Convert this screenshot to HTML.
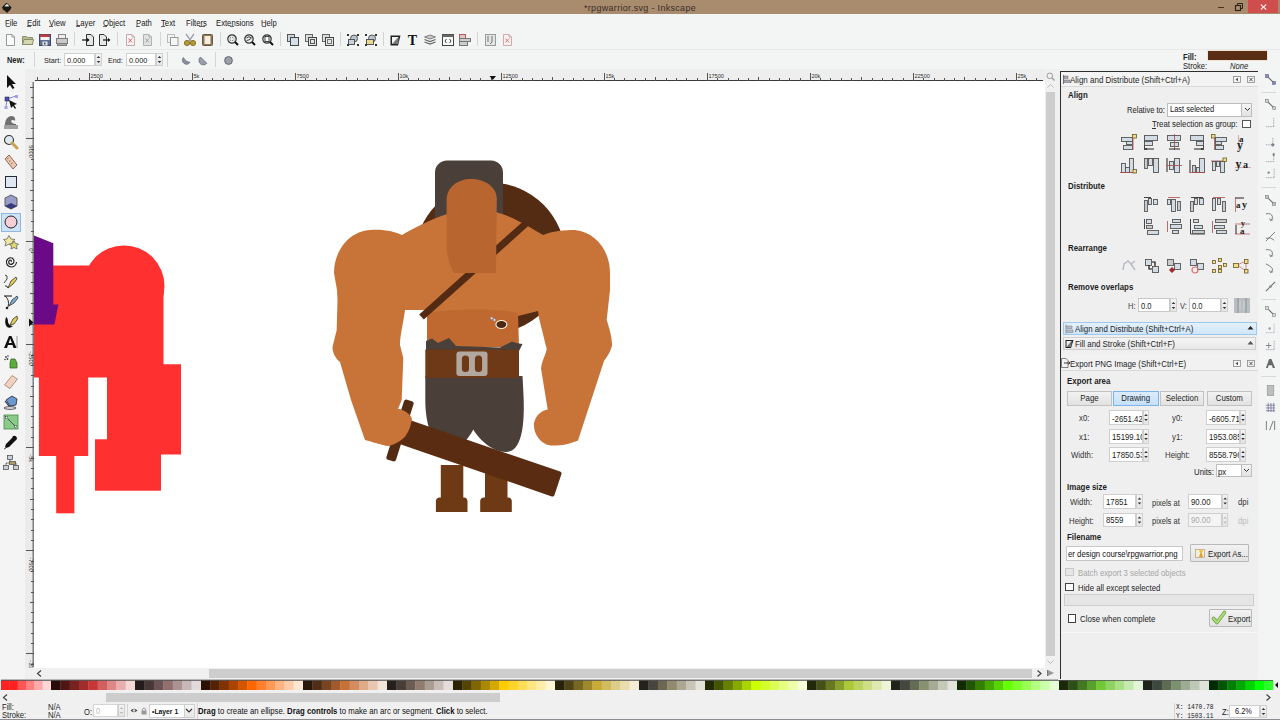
<!DOCTYPE html>
<html><head><meta charset="utf-8">
<style>
*{margin:0;padding:0;box-sizing:border-box}
html,body{width:1280px;height:720px;overflow:hidden;background:#f0f0f0;font-family:"Liberation Sans",sans-serif;color:#1e1e1e}
.a{position:absolute}
.t{position:absolute;white-space:nowrap}
.inp{position:absolute;background:#fff;border:1px solid #c9c9c9}
.btn{position:absolute;background:linear-gradient(#f2f2f2,#e3e3e3);border:1px solid #b9b9b9;border-radius:1px}
.chk{position:absolute;background:#fff;border:1px solid #4a4a4a;width:9px;height:9px}
svg{position:absolute;overflow:visible}
</style></head><body>
<div class="a" style="left:0px;top:0px;width:1280px;height:14.5px;background:#a98b6e"></div><svg style="left:1px;top:1.5px" width="12" height="12" viewBox="0 0 12 12"><path d="M5.5 1 Q6.5 1 10.5 5.5 Q9.5 8 8 9 L6 11 L4 9 Q1.5 7.5 1 5.5 Q4.5 1 5.5 1Z" fill="#1a1a14"/><path d="M3.5 4.2 Q5.5 1.8 6.2 2 Q7.5 3 8.2 4.2 Q6 4.8 3.5 4.2Z" fill="#e8e8e8"/></svg><div class="t" style="left:583.6px;top:2.07px;font-size:9.90px;line-height:12px;transform:scaleX(0.9091);transform-origin:0 0;color:#3a2f26;letter-spacing:0.35px;">*rpgwarrior.svg - Inkscape</div><div class="a" style="left:1218px;top:7px;width:6px;height:1.4px;background:#4a3418"></div><svg style="left:1234px;top:1.5px" width="10" height="10" viewBox="0 0 10 10"><rect x="1.5" y="3.5" width="5" height="5" fill="none" stroke="#2b2218" stroke-width="1.1"/><path d="M3.5 3 V1.5 H8.5 V6.5 H7" fill="none" stroke="#2b2218" stroke-width="1"/></svg><div class="a" style="left:1248px;top:0px;width:29.5px;height:13px;background:#cf4d4d"></div><svg style="left:1259.5px;top:3.5px" width="7" height="6" viewBox="0 0 7 6"><path d="M0.8 0.5 L6.2 5.5 M6.2 0.5 L0.8 5.5" stroke="#fbe8e8" stroke-width="1.1"/></svg><div class="a" style="left:0px;top:14px;width:1280px;height:55px;background:#f3f5f4"></div><div class="a" style="left:0px;top:48.5px;width:1280px;height:1px;background:#e7eae9"></div><div class="t" style="left:5.2px;top:17.07px;font-size:8.47px;line-height:12px;transform:scaleX(0.9091);transform-origin:0 0;color:#1a1a1a;">File</div><div class="a" style="left:5.5px;top:26px;width:4.2px;height:0.9px;background:#666"></div><div class="t" style="left:26.5px;top:17.07px;font-size:8.47px;line-height:12px;transform:scaleX(0.9091);transform-origin:0 0;color:#1a1a1a;">Edit</div><div class="a" style="left:26.8px;top:26px;width:4.2px;height:0.9px;background:#666"></div><div class="t" style="left:49.0px;top:17.07px;font-size:8.47px;line-height:12px;transform:scaleX(0.9091);transform-origin:0 0;color:#1a1a1a;">View</div><div class="a" style="left:49.3px;top:26px;width:4.2px;height:0.9px;background:#666"></div><div class="t" style="left:75.5px;top:17.07px;font-size:8.47px;line-height:12px;transform:scaleX(0.9091);transform-origin:0 0;color:#1a1a1a;">Layer</div><div class="a" style="left:75.8px;top:26px;width:4.2px;height:0.9px;background:#666"></div><div class="t" style="left:103.0px;top:17.07px;font-size:8.47px;line-height:12px;transform:scaleX(0.9091);transform-origin:0 0;color:#1a1a1a;">Object</div><div class="a" style="left:103.3px;top:26px;width:4.2px;height:0.9px;background:#666"></div><div class="t" style="left:136.0px;top:17.07px;font-size:8.47px;line-height:12px;transform:scaleX(0.9091);transform-origin:0 0;color:#1a1a1a;">Path</div><div class="a" style="left:136.3px;top:26px;width:4.2px;height:0.9px;background:#666"></div><div class="t" style="left:161.0px;top:17.07px;font-size:8.47px;line-height:12px;transform:scaleX(0.9091);transform-origin:0 0;color:#1a1a1a;">Text</div><div class="a" style="left:161.3px;top:26px;width:4.2px;height:0.9px;background:#666"></div><div class="t" style="left:185.6px;top:17.07px;font-size:8.47px;line-height:12px;transform:scaleX(0.9091);transform-origin:0 0;color:#1a1a1a;">Filters</div><div class="a" style="left:199.0px;top:26px;width:6px;height:0.9px;background:#666"></div><div class="t" style="left:215.6px;top:17.07px;font-size:8.47px;line-height:12px;transform:scaleX(0.9091);transform-origin:0 0;color:#1a1a1a;">Extensions</div><div class="a" style="left:229.5px;top:26px;width:4.5px;height:0.9px;background:#666"></div><div class="t" style="left:261.3px;top:17.07px;font-size:8.47px;line-height:12px;transform:scaleX(0.9091);transform-origin:0 0;color:#1a1a1a;">Help</div><div class="a" style="left:261.6px;top:26px;width:4.2px;height:0.9px;background:#666"></div><svg style="left:4.5px;top:33.5px" width="11" height="12" viewBox="0 0 11 12"><path d="M1.5 0.5 H7 L9.5 3 V11.5 H1.5Z" fill="#fafafa" stroke="#9a9a9a"/><path d="M7 0.5 V3 H9.5" fill="none" stroke="#9a9a9a"/></svg><svg style="left:21.5px;top:33.5px" width="12" height="12" viewBox="0 0 12 12"><path d="M0.5 2.5 H4.5 L5.5 3.5 H10.5 V10.5 H0.5Z" fill="#b9bb92" stroke="#8c8e6a"/><path d="M0.5 10.5 L2 5.5 H11.5 L10.5 10.5Z" fill="#d6d8ae" stroke="#8c8e6a"/></svg><svg style="left:38.5px;top:33.5px" width="12" height="12" viewBox="0 0 12 12"><rect x="0.5" y="0.5" width="11" height="11" fill="#5d6f92" stroke="#3f4a66"/><rect x="1.5" y="0.5" width="9" height="2.5" fill="#c43a3a"/><rect x="1.5" y="3" width="9" height="3" fill="#f4f4f4"/><rect x="3.5" y="7.5" width="5" height="4" fill="#e8e8e8"/><rect x="5" y="8.5" width="1.5" height="2" fill="#444"/></svg><svg style="left:56px;top:33.5px" width="12" height="12" viewBox="0 0 12 12"><rect x="2.5" y="0.5" width="7" height="4" fill="#eee" stroke="#8a8a8a"/><rect x="0.5" y="4.5" width="11" height="5" fill="#c9c9c9" stroke="#7d7d7d"/><rect x="1.5" y="9.5" width="9" height="2" fill="#aaa" stroke="#7d7d7d"/></svg><div class="a" style="left:74px;top:32px;width:1px;height:14px;background:#d4d4d4"></div><svg style="left:81.5px;top:33.5px" width="12" height="12" viewBox="0 0 12 12"><path d="M4.5 0.5 H9 L11.5 3 V11.5 H4.5Z" fill="#e6e6e6" stroke="#333"/><path d="M0 6 H7" stroke="#111" stroke-width="1.2"/><path d="M5 4 L7.5 6 L5 8Z" fill="#111"/></svg><svg style="left:99px;top:33.5px" width="12" height="12" viewBox="0 0 12 12"><path d="M0.5 0.5 H5 L7.5 3 V11.5 H0.5Z" fill="#e6e6e6" stroke="#333"/><path d="M4 6 H10" stroke="#111" stroke-width="1.2"/><path d="M9 4 L11.5 6 L9 8Z" fill="#111"/></svg><div class="a" style="left:117px;top:32px;width:1px;height:14px;background:#d4d4d4"></div><svg style="left:124.5px;top:33.5px" width="11" height="12" viewBox="0 0 11 12"><path d="M1.5 0.5 H7 L9.5 3 V11.5 H1.5Z" fill="#fbf4f4" stroke="#c9a9a9"/><path d="M7 0.5 V3 H9.5" fill="none" stroke="#c9a9a9"/><path d="M3.5 4.5 L7 8.5 M7 4.5 L3.5 8.5" stroke="#d55" stroke-width="0.9"/></svg><svg style="left:142px;top:33.5px" width="11" height="12" viewBox="0 0 11 12"><path d="M1.5 0.5 H7 L9.5 3 V11.5 H1.5Z" fill="#e2e2e2" stroke="#b0b0b0"/><path d="M7 0.5 V3 H9.5" fill="none" stroke="#b0b0b0"/><path d="M3.5 4.5 L7 8.5 M7 4.5 L3.5 8.5" stroke="#999" stroke-width="0.9"/></svg><div class="a" style="left:159.5px;top:32px;width:1px;height:14px;background:#d4d4d4"></div><svg style="left:167px;top:33.5px" width="12" height="12" viewBox="0 0 12 12"><rect x="0.5" y="0.5" width="7" height="8" fill="#f2f2f2" stroke="#bbb"/><rect x="3.5" y="3.5" width="7.5" height="8" fill="#f6f6f6" stroke="#999"/></svg><svg style="left:184px;top:33.5px" width="12" height="12" viewBox="0 0 12 12"><path d="M2 0 L7 7 M10 0 L5 7" stroke="#a0a0b0" stroke-width="1.3"/><circle cx="3" cy="9" r="2.6" fill="#b49a3a" stroke="#8a7426"/><circle cx="9" cy="9" r="2.6" fill="#b49a3a" stroke="#8a7426"/></svg><svg style="left:202px;top:33.5px" width="11" height="12" viewBox="0 0 11 12"><rect x="0.5" y="0.5" width="10" height="11" rx="1" fill="#8b7650" stroke="#6a5a3c"/><rect x="2.5" y="2" width="6" height="8" fill="#f4efe2"/></svg><div class="a" style="left:219.5px;top:32px;width:1px;height:14px;background:#d4d4d4"></div><svg style="left:227px;top:33.5px" width="12" height="12" viewBox="0 0 12 12"><circle cx="5" cy="5" r="4.2" fill="#e9edf0" stroke="#333" stroke-width="1.2"/><rect x="3" y="3.5" width="4" height="3" fill="none" stroke="#888" stroke-dasharray="1 1"/><path d="M8 8 L11 11" stroke="#111" stroke-width="2"/></svg><svg style="left:244px;top:33.5px" width="12" height="12" viewBox="0 0 12 12"><circle cx="5" cy="5" r="4.2" fill="#e9edf0" stroke="#333" stroke-width="1.2"/><path d="M2.5 4 Q5 1.5 7.5 4 Q5 6.5 2.5 6.5" fill="none" stroke="#444"/><path d="M8 8 L11 11" stroke="#111" stroke-width="2"/></svg><svg style="left:262px;top:33.5px" width="12" height="12" viewBox="0 0 12 12"><circle cx="5" cy="5" r="4.2" fill="#e9edf0" stroke="#333" stroke-width="1.2"/><rect x="3" y="2.5" width="4" height="5" fill="#fff" stroke="#444"/><path d="M8 8 L11 11" stroke="#111" stroke-width="2"/></svg><div class="a" style="left:280px;top:32px;width:1px;height:14px;background:#d4d4d4"></div><svg style="left:287px;top:33.5px" width="12" height="12" viewBox="0 0 12 12"><rect x="0.5" y="0.5" width="7" height="7" fill="#c9d6e0" stroke="#555"/><rect x="3.5" y="3.5" width="8" height="8" fill="#d4dfe8" stroke="#444"/></svg><svg style="left:304.5px;top:33.5px" width="12" height="12" viewBox="0 0 12 12"><rect x="0.5" y="0.5" width="7" height="7" fill="#ddd" stroke="#666"/><rect x="3.5" y="3.5" width="8" height="8" fill="#e6e6e6" stroke="#444"/><rect x="5.5" y="5.5" width="4" height="4" fill="none" stroke="#555"/></svg><svg style="left:321.5px;top:33.5px" width="12" height="12" viewBox="0 0 12 12"><rect x="0.5" y="0.5" width="7" height="7" fill="#ddd" stroke="#666"/><rect x="3.5" y="3.5" width="8" height="8" fill="#e6e6e6" stroke="#444"/><rect x="5.5" y="5.5" width="4" height="4" fill="none" stroke="#777"/></svg><div class="a" style="left:339.5px;top:32px;width:1px;height:14px;background:#d4d4d4"></div><svg style="left:347px;top:33.5px" width="12" height="12" viewBox="0 0 12 12"><circle cx="7" cy="4.5" r="3.5" fill="#b8c4d0" stroke="#555"/><rect x="1.5" y="5.5" width="6" height="5" fill="#c8d2dc" stroke="#555"/><g fill="#333"><rect x="0" y="0" width="2" height="2"/><rect x="10" y="0" width="2" height="2"/><rect x="0" y="10" width="2" height="2"/><rect x="10" y="10" width="2" height="2"/></g></svg><svg style="left:364.5px;top:33.5px" width="12" height="12" viewBox="0 0 12 12"><circle cx="7" cy="4.5" r="3.5" fill="#b8c4d0" stroke="#555"/><rect x="1.5" y="5.5" width="7" height="5" fill="#e8d890" stroke="#555"/><g fill="#333"><rect x="0" y="0" width="2" height="2"/><rect x="10" y="0" width="2" height="2"/><rect x="0" y="10" width="2" height="2"/><rect x="10" y="10" width="2" height="2"/></g></svg><div class="a" style="left:382.5px;top:32px;width:1px;height:14px;background:#d4d4d4"></div><svg style="left:390px;top:33.5px" width="12" height="12" viewBox="0 0 12 12"><path d="M0.5 1.5 H10.5 L8 11.5 H0.5Z" fill="#222"/><path d="M2 3 H8.5 L6.5 10 H2Z" fill="#f4f4f4"/><path d="M2 10 L8.5 3 V10Z" fill="#777"/></svg><svg style="left:406px;top:32.5px" width="13" height="13" viewBox="0 0 13 13"><text x="6.5" y="12" text-anchor="middle" font-family="Liberation Serif" font-weight="bold" font-size="14" fill="#111">T</text></svg><svg style="left:424px;top:33.5px" width="12" height="12" viewBox="0 0 12 12"><path d="M0.5 3 L6 1 L11.5 3 L6 5Z" fill="#ccc" stroke="#666" stroke-width="0.8"/><path d="M0.5 5.5 L6 7.5 L11.5 5.5 M0.5 8 L6 10 L11.5 8" fill="none" stroke="#666" stroke-width="1.3"/></svg><svg style="left:442px;top:33.5px" width="12" height="12" viewBox="0 0 12 12"><rect x="0.5" y="0.5" width="11" height="11" fill="#f8f8f8" stroke="#444"/><rect x="0.5" y="0.5" width="11" height="2.5" fill="#666"/><path d="M4.5 5 L3 7 L4.5 9 M7.5 5 L9 7 L7.5 9" fill="none" stroke="#333" stroke-width="0.9"/></svg><svg style="left:459px;top:33.5px" width="12" height="12" viewBox="0 0 12 12"><rect x="0.5" y="0.5" width="6" height="4" fill="#d8c8c8" stroke="#b55"/><rect x="0.5" y="4.5" width="11" height="3" fill="#ccc" stroke="#777"/><rect x="0.5" y="7.5" width="8" height="4" fill="#ccc" stroke="#777"/></svg><div class="a" style="left:476.5px;top:32px;width:1px;height:14px;background:#d4d4d4"></div><svg style="left:485px;top:33.5px" width="11" height="12" viewBox="0 0 11 12"><rect x="0.5" y="0.5" width="10" height="11" fill="#e4e4e4" stroke="#9a9a9a"/><path d="M3 2 V8 M7 2 V8 L5 10" fill="none" stroke="#777"/></svg><svg style="left:502px;top:33.5px" width="11" height="12" viewBox="0 0 11 12"><path d="M1.5 0.5 H7 L9.5 3 V11.5 H1.5Z" fill="#fbf2f2" stroke="#d3a9a9"/><path d="M7 0.5 V3 H9.5" fill="none" stroke="#d3a9a9"/><path d="M3.5 4.5 L7 8.5 M7 4.5 L3.5 8.5" stroke="#d66" stroke-width="0.9"/></svg><div class="t" style="left:7.0px;top:54.68px;font-size:8.14px;line-height:12px;transform:scaleX(0.9091);transform-origin:0 0;font-weight:bold;color:#222;">New:</div><div class="a" style="left:33.5px;top:52px;width:1px;height:15px;background:#d4d4d4"></div><div class="t" style="left:44.0px;top:54.76px;font-size:7.92px;line-height:12px;transform:scaleX(0.9091);transform-origin:0 0;color:#222;">Start:</div><div class="inp" style="left:64px;top:53px;width:31px;height:13px;border-color:#d0d0d0"></div><div class="t" style="left:67.0px;top:54.72px;font-size:8.03px;line-height:12px;transform:scaleX(0.9091);transform-origin:0 0;color:#111;">0.000</div><div class="a" style="left:95px;top:53px;width:7px;height:13px;background:linear-gradient(#f4f4f4,#e4e4e4);border:1px solid #d0d0d0"></div><svg style="left:95px;top:53px" width="7" height="13" viewBox="0 0 7 13"><path d="M1.7 5.0 L3.5 3.0 L5.3 5.0Z M1.7 8.0 L3.5 10.0 L5.3 8.0Z" fill="#333"/></svg><div class="t" style="left:108.0px;top:54.76px;font-size:7.92px;line-height:12px;transform:scaleX(0.9091);transform-origin:0 0;color:#222;">End:</div><div class="inp" style="left:126px;top:53px;width:30px;height:13px;border-color:#d0d0d0"></div><div class="t" style="left:128.5px;top:54.72px;font-size:8.03px;line-height:12px;transform:scaleX(0.9091);transform-origin:0 0;color:#111;">0.000</div><div class="a" style="left:156px;top:53px;width:7px;height:13px;background:linear-gradient(#f4f4f4,#e4e4e4);border:1px solid #d0d0d0"></div><svg style="left:156px;top:53px" width="7" height="13" viewBox="0 0 7 13"><path d="M1.7 5.0 L3.5 3.0 L5.3 5.0Z M1.7 8.0 L3.5 10.0 L5.3 8.0Z" fill="#333"/></svg><div class="a" style="left:167px;top:52px;width:1px;height:15px;background:#d4d4d4"></div><svg style="left:180.5px;top:55.5px" width="10" height="10" viewBox="0 0 10 10"><path d="M2.3 1.6 A4.1 4.1 0 1 0 9 6.3 Q5.2 6.6 2.3 1.6Z" fill="#8c90a0" stroke="#5d6270" stroke-width="0.7"/></svg><svg style="left:197.5px;top:55.5px" width="10" height="10" viewBox="0 0 10 10"><path d="M2.5 1 C0.3 3 0.5 6.5 2.7 8 C4.8 9.5 7.5 9 8.8 7.3 Z" fill="#9a9eac" stroke="#5d6270" stroke-width="0.7"/></svg><div class="a" style="left:214.8px;top:52px;width:1px;height:15px;background:#d4d4d4"></div><svg style="left:223.5px;top:55.5px" width="9" height="9" viewBox="0 0 9 9"><circle cx="4.5" cy="4.5" r="3.9" fill="#9ca0aa" stroke="#5a5e68" stroke-width="0.9"/></svg><div class="t" style="left:1183.0px;top:50.60px;font-size:8.36px;line-height:12px;transform:scaleX(0.9091);transform-origin:0 0;color:#222;font-weight:600;">Fill:</div><div class="a" style="left:1208px;top:51.3px;width:59px;height:8.4px;background:#5a2e14;box-shadow:0 0 0 0.6px #f0d8c0"></div><div class="t" style="left:1183.0px;top:59.60px;font-size:8.36px;line-height:12px;transform:scaleX(0.9091);transform-origin:0 0;color:#222;">Stroke:</div><div class="t" style="left:1229.8px;top:59.60px;font-size:8.36px;line-height:12px;transform:scaleX(0.9091);transform-origin:0 0;font-style:italic;color:#222;">None</div><div class="a" style="left:0px;top:69px;width:25px;height:611px;background:#f3f4f3"></div><div class="a" style="left:1px;top:212.5px;width:20px;height:19px;background:#cfe3f6;border:1px solid #8fb8e0"></div><svg style="left:3px;top:74px" width="16" height="16" viewBox="0 0 16 16"><path d="M4 1 L4 14 L7 11 L9.5 15 L11.5 14 L9 10 L13 10Z" fill="#111"/></svg><svg style="left:3px;top:94px" width="16" height="16" viewBox="0 0 16 16"><path d="M4 5 L13 2" stroke="#6a6ad0" stroke-width="0.8"/><path d="M4 5 L3 13" stroke="#6a6ad0" stroke-width="0.8"/><rect x="2" y="3" width="4" height="4" fill="#4848c8" stroke="#222" stroke-width="0.5"/><rect x="12" y="1" width="3" height="3" fill="#a0a0e8"/><rect x="1.5" y="12" width="3" height="3" fill="#a0a0e8"/><path d="M6 6 L14 10 L11 11 L13 14 L12 15 L10 12 L8 14Z" fill="#111"/></svg><svg style="left:3px;top:114px" width="16" height="16" viewBox="0 0 16 16"><path d="M2 14 V9 Q3 3 8 2 Q13 2 12 7 Q10 5 8 7 Q9 10 13 10 V14Z" fill="#707070"/><rect x="1" y="11" width="14" height="4" fill="#a0a0a0"/></svg><svg style="left:3px;top:134px" width="16" height="16" viewBox="0 0 16 16"><circle cx="6" cy="6" r="4.5" fill="#dde8f0" stroke="#333" stroke-width="1.1"/><path d="M9 9 L14 14" stroke="#c8a050" stroke-width="3" stroke-linecap="round"/></svg><svg style="left:3px;top:154px" width="16" height="16" viewBox="0 0 16 16"><path d="M2 5 L6 1 L14 11 L10 15Z" fill="#e8c8b0" stroke="#8a5a4a" stroke-width="0.9"/><path d="M4 5 L5.5 4 M6 7.5 L7.5 6.5 M8 10 L9.5 9" stroke="#8a5a4a" stroke-width="0.8"/></svg><svg style="left:3px;top:174px" width="16" height="16" viewBox="0 0 16 16"><rect x="2.5" y="2.5" width="11" height="11" fill="#dfe8f0" stroke="#2a2a3a" stroke-width="1"/></svg><svg style="left:3px;top:194px" width="16" height="16" viewBox="0 0 16 16"><path d="M8 1 L14 4 V12 L8 15 L2 12 V4Z" fill="#9a9cc8" stroke="#444" stroke-width="0.8"/><path d="M2 12 L8 9 L14 12 L8 15Z" fill="#3a3a7a"/></svg><svg style="left:3px;top:214px" width="16" height="16" viewBox="0 0 16 16"><circle cx="8" cy="8" r="6" fill="#f6cfd6" stroke="#222" stroke-width="1"/></svg><svg style="left:3px;top:234px" width="16" height="16" viewBox="0 0 16 16"><path d="M6 1.5 L8 5 L12 5.5 L9 8 L10 12 L6 10 L2 12 L3 8 L0.5 5.5 L4 5Z" fill="#f0e8a0" stroke="#555" stroke-width="0.7"/><path d="M11 7 L12.5 9.5 L15.5 10 L13.5 12 L14 15 L11 13.5 L8 15 L8.5 12 L6.5 10 L9.5 9.5Z" fill="#e0d870" stroke="#555" stroke-width="0.7"/></svg><svg style="left:3px;top:254px" width="16" height="16" viewBox="0 0 16 16"><path d="M8 8 Q9 6 7 6 Q5 7 6 9.5 Q8 11.5 10.5 9 Q12 6 9 4 Q5 3 3.5 7 Q3 12 8 13 Q13 13 13.5 8" fill="none" stroke="#222" stroke-width="1.1"/></svg><svg style="left:3px;top:274px" width="16" height="16" viewBox="0 0 16 16"><path d="M2 1 Q5 1 4 5 L1 9" fill="none" stroke="#333" stroke-width="0.9"/><path d="M5 14 L8 7 L13 3 L14 5 L10 10Z" fill="#e8d050" stroke="#333" stroke-width="0.8"/><path d="M5 14 Q4 11 2 12" fill="none" stroke="#333"/></svg><svg style="left:3px;top:294px" width="16" height="16" viewBox="0 0 16 16"><path d="M1 2 H9" stroke="#333" stroke-width="1.2"/><path d="M2 2 Q7 6 5 13" fill="none" stroke="#333" stroke-width="1"/><path d="M6 12 L9 6 L14 2 L15 4 L11 9Z" fill="#7ab0d8" stroke="#333" stroke-width="0.8"/><circle cx="4" cy="14" r="1.3" fill="#222"/></svg><svg style="left:3px;top:314px" width="16" height="16" viewBox="0 0 16 16"><path d="M3 3 Q1 9 4 13 Q7 15 10 12 Q6 12 5 8 Q5 4 3 3Z" fill="#111"/><path d="M7 11 L10 5 L14 2 L14.5 5 L11 10Z" fill="#e8d050" stroke="#333" stroke-width="0.8"/></svg><svg style="left:3px;top:334px" width="16" height="16" viewBox="0 0 16 16"><path d="M1 14 L6 2 H8.5 L13.5 14 H10.5 L9.5 11 H5 L4 14Z M5.7 9 H8.8 L7.2 4.5Z" fill="#111"/><path d="M14 2 V14" stroke="#999" stroke-width="1"/></svg><svg style="left:3px;top:354px" width="16" height="16" viewBox="0 0 16 16"><g fill="#444"><circle cx="3" cy="3" r="0.9"/><circle cx="5" cy="2" r="0.8"/><circle cx="2" cy="5.5" r="0.8"/><circle cx="4.5" cy="5" r="0.9"/></g><path d="M7 9 L8 5 H12 L14 9 V14 H7Z" fill="#5cae3c" stroke="#2a5a1a" stroke-width="0.7"/></svg><svg style="left:3px;top:374px" width="16" height="16" viewBox="0 0 16 16"><path d="M1.5 11 L9 1.5 L14.5 5 L7 14.5Z" fill="#f0d0c0" stroke="#a08070" stroke-width="0.8"/></svg><svg style="left:3px;top:394px" width="16" height="16" viewBox="0 0 16 16"><path d="M3 6 L9 2 L14 5 L13 11 L7 12Z" fill="#6a9ad0" stroke="#223" stroke-width="0.8"/><path d="M2 7 L6 12" stroke="#223" stroke-width="1.2"/><ellipse cx="7" cy="14" rx="6" ry="1.3" fill="none" stroke="#334" stroke-width="0.9"/></svg><svg style="left:3px;top:414px" width="16" height="16" viewBox="0 0 16 16"><rect x="1" y="1" width="14" height="14" fill="#8acb8a" stroke="#4a8a4a" stroke-width="0.8"/><path d="M1 1 L15 15" stroke="#fff" stroke-width="0" /><path d="M3.5 3.5 L12.5 12.5" stroke="#333" stroke-width="0.8"/><rect x="2.5" y="2.5" width="2.2" height="2.2" fill="#fff" stroke="#333" stroke-width="0.5"/><rect x="11.5" y="11.5" width="2.2" height="2.2" fill="#fff" stroke="#333" stroke-width="0.5"/></svg><svg style="left:3px;top:434px" width="16" height="16" viewBox="0 0 16 16"><path d="M10 2 Q13 1 14 4 Q14 6 12 7 L6 13 L3 14 L2 13 L3 10 L9 4Z" fill="#111"/><path d="M3 14 L1 15" stroke="#555"/></svg><svg style="left:3px;top:454px" width="16" height="16" viewBox="0 0 16 16"><rect x="4.5" y="1.5" width="5" height="4" fill="#c8d0d8" stroke="#555" stroke-width="0.8"/><rect x="6.5" y="7.5" width="6" height="3" fill="#e8d070" stroke="#555" stroke-width="0.8"/><rect x="0.5" y="11.5" width="5" height="4" fill="#c8d0d8" stroke="#555" stroke-width="0.8"/><rect x="10.5" y="11.5" width="5" height="4" fill="#c8d0d8" stroke="#555" stroke-width="0.8"/><path d="M7 5.5 V7.5 M3 11.5 V9 H13 V11.5" fill="none" stroke="#555" stroke-width="0.8"/></svg><div class="a" style="left:25px;top:69px;width:1020px;height:12px;background:#eeeeee"></div><div class="a" style="left:25px;top:81px;width:9px;height:587px;background:#ebebeb"></div><svg style="left:0;top:0" width="1280" height="720"><path d="M35 80.5 H1043" stroke="#3a3a3a" stroke-width="1"/><path d="M37.5 77 V81" stroke="#555" stroke-width="1"/><path d="M48.5 78 V81" stroke="#555" stroke-width="1"/><path d="M58.5 78 V81" stroke="#555" stroke-width="1"/><path d="M68.5 78 V81" stroke="#555" stroke-width="1"/><path d="M79.5 78 V81" stroke="#555" stroke-width="1"/><path d="M89.5 73 V81" stroke="#555" stroke-width="1"/><path d="M99.5 78 V81" stroke="#555" stroke-width="1"/><path d="M110.5 78 V81" stroke="#555" stroke-width="1"/><path d="M120.5 78 V81" stroke="#555" stroke-width="1"/><path d="M130.5 78 V81" stroke="#555" stroke-width="1"/><path d="M140.5 77 V81" stroke="#555" stroke-width="1"/><path d="M151.5 78 V81" stroke="#555" stroke-width="1"/><path d="M161.5 78 V81" stroke="#555" stroke-width="1"/><path d="M171.5 78 V81" stroke="#555" stroke-width="1"/><path d="M182.5 78 V81" stroke="#555" stroke-width="1"/><text x="90.4" y="77.5" font-family="Liberation Sans" font-size="5.6" fill="#333">2500</text><path d="M192.5 73 V81" stroke="#555" stroke-width="1"/><path d="M202.5 78 V81" stroke="#555" stroke-width="1"/><path d="M212.5 78 V81" stroke="#555" stroke-width="1"/><path d="M223.5 78 V81" stroke="#555" stroke-width="1"/><path d="M233.5 78 V81" stroke="#555" stroke-width="1"/><path d="M243.5 77 V81" stroke="#555" stroke-width="1"/><path d="M254.5 78 V81" stroke="#555" stroke-width="1"/><path d="M264.5 78 V81" stroke="#555" stroke-width="1"/><path d="M274.5 78 V81" stroke="#555" stroke-width="1"/><path d="M285.5 78 V81" stroke="#555" stroke-width="1"/><text x="193.4" y="77.5" font-family="Liberation Sans" font-size="5.6" fill="#333">5k</text><path d="M295.5 73 V81" stroke="#555" stroke-width="1"/><path d="M305.5 78 V81" stroke="#555" stroke-width="1"/><path d="M316.5 78 V81" stroke="#555" stroke-width="1"/><path d="M326.5 78 V81" stroke="#555" stroke-width="1"/><path d="M336.5 78 V81" stroke="#555" stroke-width="1"/><path d="M346.5 77 V81" stroke="#555" stroke-width="1"/><path d="M357.5 78 V81" stroke="#555" stroke-width="1"/><path d="M367.5 78 V81" stroke="#555" stroke-width="1"/><path d="M377.5 78 V81" stroke="#555" stroke-width="1"/><path d="M388.5 78 V81" stroke="#555" stroke-width="1"/><text x="296.4" y="77.5" font-family="Liberation Sans" font-size="5.6" fill="#333">7500</text><path d="M398.5 73 V81" stroke="#555" stroke-width="1"/><path d="M408.5 78 V81" stroke="#555" stroke-width="1"/><path d="M418.5 78 V81" stroke="#555" stroke-width="1"/><path d="M429.5 78 V81" stroke="#555" stroke-width="1"/><path d="M439.5 78 V81" stroke="#555" stroke-width="1"/><path d="M449.5 77 V81" stroke="#555" stroke-width="1"/><path d="M460.5 78 V81" stroke="#555" stroke-width="1"/><path d="M470.5 78 V81" stroke="#555" stroke-width="1"/><path d="M480.5 78 V81" stroke="#555" stroke-width="1"/><path d="M491.5 78 V81" stroke="#555" stroke-width="1"/><text x="399.4" y="77.5" font-family="Liberation Sans" font-size="5.6" fill="#333">10k</text><path d="M501.5 73 V81" stroke="#555" stroke-width="1"/><path d="M511.5 78 V81" stroke="#555" stroke-width="1"/><path d="M522.5 78 V81" stroke="#555" stroke-width="1"/><path d="M532.5 78 V81" stroke="#555" stroke-width="1"/><path d="M542.5 78 V81" stroke="#555" stroke-width="1"/><path d="M552.5 77 V81" stroke="#555" stroke-width="1"/><path d="M563.5 78 V81" stroke="#555" stroke-width="1"/><path d="M573.5 78 V81" stroke="#555" stroke-width="1"/><path d="M583.5 78 V81" stroke="#555" stroke-width="1"/><path d="M594.5 78 V81" stroke="#555" stroke-width="1"/><text x="502.4" y="77.5" font-family="Liberation Sans" font-size="5.6" fill="#333">12500</text><path d="M604.5 73 V81" stroke="#555" stroke-width="1"/><path d="M614.5 78 V81" stroke="#555" stroke-width="1"/><path d="M624.5 78 V81" stroke="#555" stroke-width="1"/><path d="M635.5 78 V81" stroke="#555" stroke-width="1"/><path d="M645.5 78 V81" stroke="#555" stroke-width="1"/><path d="M655.5 77 V81" stroke="#555" stroke-width="1"/><path d="M666.5 78 V81" stroke="#555" stroke-width="1"/><path d="M676.5 78 V81" stroke="#555" stroke-width="1"/><path d="M686.5 78 V81" stroke="#555" stroke-width="1"/><path d="M697.5 78 V81" stroke="#555" stroke-width="1"/><text x="605.4" y="77.5" font-family="Liberation Sans" font-size="5.6" fill="#333">15k</text><path d="M707.5 73 V81" stroke="#555" stroke-width="1"/><path d="M717.5 78 V81" stroke="#555" stroke-width="1"/><path d="M728.5 78 V81" stroke="#555" stroke-width="1"/><path d="M738.5 78 V81" stroke="#555" stroke-width="1"/><path d="M748.5 78 V81" stroke="#555" stroke-width="1"/><path d="M758.5 77 V81" stroke="#555" stroke-width="1"/><path d="M769.5 78 V81" stroke="#555" stroke-width="1"/><path d="M779.5 78 V81" stroke="#555" stroke-width="1"/><path d="M789.5 78 V81" stroke="#555" stroke-width="1"/><path d="M800.5 78 V81" stroke="#555" stroke-width="1"/><text x="708.4" y="77.5" font-family="Liberation Sans" font-size="5.6" fill="#333">17500</text><path d="M810.5 73 V81" stroke="#555" stroke-width="1"/><path d="M820.5 78 V81" stroke="#555" stroke-width="1"/><path d="M830.5 78 V81" stroke="#555" stroke-width="1"/><path d="M841.5 78 V81" stroke="#555" stroke-width="1"/><path d="M851.5 78 V81" stroke="#555" stroke-width="1"/><path d="M861.5 77 V81" stroke="#555" stroke-width="1"/><path d="M872.5 78 V81" stroke="#555" stroke-width="1"/><path d="M882.5 78 V81" stroke="#555" stroke-width="1"/><path d="M892.5 78 V81" stroke="#555" stroke-width="1"/><path d="M903.5 78 V81" stroke="#555" stroke-width="1"/><text x="811.4" y="77.5" font-family="Liberation Sans" font-size="5.6" fill="#333">20k</text><path d="M913.5 73 V81" stroke="#555" stroke-width="1"/><path d="M923.5 78 V81" stroke="#555" stroke-width="1"/><path d="M934.5 78 V81" stroke="#555" stroke-width="1"/><path d="M944.5 78 V81" stroke="#555" stroke-width="1"/><path d="M954.5 78 V81" stroke="#555" stroke-width="1"/><path d="M964.5 77 V81" stroke="#555" stroke-width="1"/><path d="M975.5 78 V81" stroke="#555" stroke-width="1"/><path d="M985.5 78 V81" stroke="#555" stroke-width="1"/><path d="M995.5 78 V81" stroke="#555" stroke-width="1"/><path d="M1006.5 78 V81" stroke="#555" stroke-width="1"/><text x="914.4" y="77.5" font-family="Liberation Sans" font-size="5.6" fill="#333">22500</text><path d="M1016.5 73 V81" stroke="#555" stroke-width="1"/><path d="M1026.5 78 V81" stroke="#555" stroke-width="1"/><path d="M1036.5 78 V81" stroke="#555" stroke-width="1"/><text x="1017.4" y="77.5" font-family="Liberation Sans" font-size="5.6" fill="#333">25k</text><path d="M489.5 76 L496 76 L492.7 80Z" fill="#111"/></svg><svg style="left:0;top:0" width="1280" height="720"><path d="M33.2 82 V667" stroke="#6e6e6e" stroke-width="1.3"/><path d="M30 87.5 H34" stroke="#555" stroke-width="1"/><path d="M31 97.5 H34" stroke="#555" stroke-width="1"/><path d="M31 107.5 H34" stroke="#555" stroke-width="1"/><path d="M31 118.5 H34" stroke="#555" stroke-width="1"/><path d="M31 128.5 H34" stroke="#555" stroke-width="1"/><path d="M26 138.5 H34" stroke="#555" stroke-width="1"/><path d="M31 149.5 H34" stroke="#555" stroke-width="1"/><path d="M31 159.5 H34" stroke="#555" stroke-width="1"/><path d="M31 169.5 H34" stroke="#555" stroke-width="1"/><path d="M31 180.5 H34" stroke="#555" stroke-width="1"/><path d="M30 190.5 H34" stroke="#555" stroke-width="1"/><path d="M31 200.5 H34" stroke="#555" stroke-width="1"/><path d="M31 210.5 H34" stroke="#555" stroke-width="1"/><path d="M31 221.5 H34" stroke="#555" stroke-width="1"/><path d="M31 231.5 H34" stroke="#555" stroke-width="1"/><path d="M26 241.5 H34" stroke="#555" stroke-width="1"/><path d="M31 252.5 H34" stroke="#555" stroke-width="1"/><path d="M31 262.5 H34" stroke="#555" stroke-width="1"/><path d="M31 272.5 H34" stroke="#555" stroke-width="1"/><path d="M31 282.5 H34" stroke="#555" stroke-width="1"/><path d="M30 293.5 H34" stroke="#555" stroke-width="1"/><path d="M31 303.5 H34" stroke="#555" stroke-width="1"/><path d="M31 313.5 H34" stroke="#555" stroke-width="1"/><path d="M31 324.5 H34" stroke="#555" stroke-width="1"/><path d="M31 334.5 H34" stroke="#555" stroke-width="1"/><path d="M26 344.5 H34" stroke="#555" stroke-width="1"/><path d="M31 355.5 H34" stroke="#555" stroke-width="1"/><path d="M31 365.5 H34" stroke="#555" stroke-width="1"/><path d="M31 375.5 H34" stroke="#555" stroke-width="1"/><path d="M31 386.5 H34" stroke="#555" stroke-width="1"/><path d="M30 396.5 H34" stroke="#555" stroke-width="1"/><path d="M31 406.5 H34" stroke="#555" stroke-width="1"/><path d="M31 416.5 H34" stroke="#555" stroke-width="1"/><path d="M31 427.5 H34" stroke="#555" stroke-width="1"/><path d="M31 437.5 H34" stroke="#555" stroke-width="1"/><path d="M26 447.5 H34" stroke="#555" stroke-width="1"/><path d="M31 458.5 H34" stroke="#555" stroke-width="1"/><path d="M31 468.5 H34" stroke="#555" stroke-width="1"/><path d="M31 478.5 H34" stroke="#555" stroke-width="1"/><path d="M31 488.5 H34" stroke="#555" stroke-width="1"/><path d="M30 499.5 H34" stroke="#555" stroke-width="1"/><path d="M31 509.5 H34" stroke="#555" stroke-width="1"/><path d="M31 519.5 H34" stroke="#555" stroke-width="1"/><path d="M31 530.5 H34" stroke="#555" stroke-width="1"/><path d="M31 540.5 H34" stroke="#555" stroke-width="1"/><path d="M26 550.5 H34" stroke="#555" stroke-width="1"/><path d="M31 561.5 H34" stroke="#555" stroke-width="1"/><path d="M31 571.5 H34" stroke="#555" stroke-width="1"/><path d="M31 581.5 H34" stroke="#555" stroke-width="1"/><path d="M31 592.5 H34" stroke="#555" stroke-width="1"/><path d="M30 602.5 H34" stroke="#555" stroke-width="1"/><path d="M31 612.5 H34" stroke="#555" stroke-width="1"/><path d="M31 622.5 H34" stroke="#555" stroke-width="1"/><path d="M31 633.5 H34" stroke="#555" stroke-width="1"/><path d="M31 643.5 H34" stroke="#555" stroke-width="1"/><path d="M26 653.5 H34" stroke="#555" stroke-width="1"/><path d="M31 664.5 H34" stroke="#555" stroke-width="1"/><text transform="translate(29.2 145.3) rotate(90)" font-family="Liberation Sans" font-size="5.6" fill="#333">5000</text><text transform="translate(29.2 248.3) rotate(90)" font-family="Liberation Sans" font-size="5.6" fill="#333">0</text><text transform="translate(29.2 351.3) rotate(90)" font-family="Liberation Sans" font-size="5.6" fill="#333">-2500</text><text transform="translate(29.2 454.3) rotate(90)" font-family="Liberation Sans" font-size="5.6" fill="#333">-5k</text><text transform="translate(29.2 557.3) rotate(90)" font-family="Liberation Sans" font-size="5.6" fill="#333">-7500</text><text transform="translate(29.2 660.3) rotate(90)" font-family="Liberation Sans" font-size="5.6" fill="#333">-10k</text><path d="M29 318.5 L33.5 322.5 L29 326.5Z" fill="#111"/></svg><div class="a" style="left:34px;top:81px;width:1011px;height:587px;background:#fff"></div><svg class="a" style="left:0;top:0" width="1280" height="720" viewBox="0 0 1280 720">
<defs><clipPath id="cv"><rect x="34" y="81" width="1011" height="587"/></clipPath></defs>
<g clip-path="url(#cv)">
 <g fill="#fe3030">
  <rect x="30" y="265.5" width="94" height="100"/><rect x="120" y="286" width="43.5" height="80"/>
  <circle cx="124" cy="286" r="40.5"/>
  <rect x="30" y="364.5" width="151" height="13"/>
  <rect x="107" y="364.5" width="74" height="90"/>
  <rect x="38.9" y="377" width="49.3" height="79"/>
  <rect x="56.2" y="455" width="18.2" height="58.3"/>
  <rect x="95" y="439.3" width="66" height="51.4"/>
 </g>
 <path fill="#6a0a86" d="M30 234 L53.3 243.3 L53.3 304.4 L58.4 304.4 L54.4 324.4 L30 324.4Z"/>
 <circle cx="490" cy="258" r="75.5" fill="#542c14"/>
 <rect x="435" y="160.5" width="68" height="80" rx="12" fill="#4a3f39"/>
 <path fill="#c87438" d="M334 273 C334 250 350 231 370 230 C385 229 395 232 402 235 C420 225 445 211 472 209 C500 208 525 224 543 235 C552 231 565 230 575 230 C595 232 610 250 610 273 L610 290 L606.7 320 C610 330 612 338 612 345 C611 352 606 358 604 361 L578 440.6 C568 445 558 446 550.6 445.5 C540 444 533 433 534 423 C536 415 542 410 547.7 409.5 L541 368.6 C542 360 546 354 546.7 349 L539 318 L538 311 L518 316 L518 346 L427 346 L427 310 L405 310 C403 325 400 335 400 345 L403.3 358 L401.7 400 L398 409 C404 410 412 414 411.7 420 C410 430 407 434 405 436.7 C398 443 392 446 386.7 445.8 L365 440 L351 400 L340 362 C335 358 332.5 352 332.5 347 L336.7 330 L337.5 300 L337 290Z"/>
 <path fill="#bf6930" d="M427 313 C450 309 495 308 518 313 L519 347 L427 347Z"/>
 <path d="M527 222.5 L421.5 317" stroke="#532b14" stroke-width="7"/>
 <path fill="#b8652f" d="M446.6 200 C446.6 187 458 179 471 179 C485 179 496.8 187 496.8 199 L496 273 L454 273 C452 271 446.6 256 446.6 247 Z"/>
 <path fill="#4a3f39" d="M425.3 376 L522.5 376 L523.5 395 C525 428 521 452 506 452 C493 452 480 441 473.3 429.6 C468 440 460 448 450 448 C434 448 425.3 428 425.3 400Z"/>
 <g fill="#6e3915">
  <path d="M440.8 465 L463.3 465 L463.3 497.4 L464 497.4 C466 497.4 467.5 499 467.5 501 L467.5 512 L435.9 512 L435.9 501 C435.9 499 437.5 497.4 439.5 497.4 L440.8 497.4Z"/>
  <path d="M485 465 L507.5 465 L507.5 497.4 L508.3 497.4 C510.3 497.4 511.8 499 511.8 501 L511.8 512 L480.2 512 L480.2 501 C480.2 499 481.8 497.4 483.8 497.4 L485 497.4Z"/>
 </g>
 <path fill="#4a3f39" d="M426 351 L426 341 L432 338.5 L438 343 L449 338 L456 346 L500 347.5 L512 341.5 L516 343 L522.5 344 L519 351Z"/>
 <rect x="425.3" y="349.6" width="93.7" height="28.2" fill="#6d3916"/>
 <rect x="456.4" y="351.5" width="31.1" height="24.4" rx="3" fill="#b3a89f"/>
 <rect x="461.9" y="355.4" width="7.1" height="16.6" rx="3.5" fill="#6d3916"/>
 <rect x="474.9" y="355.4" width="7.2" height="16.6" rx="3.5" fill="#6d3916"/>
 <rect x="-5" y="-31.5" width="10" height="63" rx="2.5" fill="#532a12" transform="translate(400 430.5) rotate(17.5)"/>
 <path fill="#5a2d12" stroke="#5a2d12" stroke-width="4" stroke-linejoin="round" d="M396 417.5 L559.5 473.5 L552.5 494.5 L388.5 438Z"/>
 <path fill="#c87438" d="M398 409 C404 410 412 414 411.7 420 C410 430 407 434 405 436.7 C398 443 392 446 386.7 445.8 L372 442 L378 415Z"/>
 <ellipse cx="501.4" cy="324.5" rx="5.5" ry="4" fill="#4a2a14" stroke="#fff6e0" stroke-width="1.1"/><path d="M491.7 316.8 L493.2 318.3 L491.7 319.8 L490.2 318.3Z M494.4 318.4 L495.9 319.9 L494.4 321.4 L492.9 319.9Z" fill="#d8e4f8" stroke="#7a8ab8" stroke-width="0.5"/>
</g>
</svg>
<div class="a" style="left:1045px;top:69px;width:13px;height:599px;background:#f0f0f0"></div><div class="a" style="left:1046px;top:92px;width:9px;height:564px;background:#cdcdcd"></div><svg style="left:1046px;top:72px" width="9" height="9" viewBox="0 0 9 9"><circle cx="3.8" cy="3.8" r="2.8" fill="none" stroke="#9a9a9a" stroke-width="1"/><path d="M6 6 L8.5 8.5" stroke="#9a9a9a" stroke-width="1.3"/></svg><svg style="left:1046px;top:83px" width="9" height="6" viewBox="0 0 9 6"><path d="M1.5 4.5 L4.5 1.5 L7.5 4.5" fill="none" stroke="#bdbdbd" stroke-width="1"/></svg><svg style="left:1046px;top:659px" width="9" height="6" viewBox="0 0 9 6"><path d="M1.5 1.5 L4.5 4.5 L7.5 1.5" fill="none" stroke="#bdbdbd" stroke-width="1"/></svg><div class="a" style="left:25px;top:668px;width:1035px;height:11px;background:#f0f0f0"></div><div class="a" style="left:209px;top:669px;width:823px;height:9px;background:#cdcdcd"></div><svg style="left:36px;top:670px" width="7" height="7" viewBox="0 0 7 7"><path d="M5 0.5 L1.5 3.5 L5 6.5" fill="none" stroke="#444" stroke-width="1.2"/></svg><svg style="left:1036px;top:670px" width="7" height="7" viewBox="0 0 7 7"><path d="M1.5 0.5 L5 3.5 L1.5 6.5" fill="none" stroke="#444" stroke-width="1.2"/></svg><svg style="left:1047px;top:669px" width="8" height="8" viewBox="0 0 8 8"><path d="M1 1 L7 4 L1 7Z" fill="#9a9a9a"/><path d="M0.5 1 V7" stroke="#777"/></svg><div class="a" style="left:0px;top:679px;width:1280px;height:12px;background:#f0f0f0"></div><svg style="left:0;top:0" width="1280" height="720"><rect x="1.00" y="680.5" width="8.63" height="9.5" fill="#ff2020"/><rect x="9.33" y="680.5" width="8.63" height="9.5" fill="#ff2020"/><rect x="17.67" y="680.5" width="8.63" height="9.5" fill="#ff5555"/><rect x="26.00" y="680.5" width="8.63" height="9.5" fill="#ff8080"/><rect x="34.33" y="680.5" width="8.63" height="9.5" fill="#ffaaaa"/><rect x="42.67" y="680.5" width="8.63" height="9.5" fill="#ffd5d5"/><rect x="51.00" y="680.5" width="9.63" height="9.5" fill="#280b0b"/><rect x="60.33" y="680.5" width="9.63" height="9.5" fill="#501616"/><rect x="69.67" y="680.5" width="9.63" height="9.5" fill="#782121"/><rect x="79.00" y="680.5" width="9.63" height="9.5" fill="#a02c2c"/><rect x="88.33" y="680.5" width="9.63" height="9.5" fill="#c83737"/><rect x="97.67" y="680.5" width="9.63" height="9.5" fill="#d35f5f"/><rect x="107.00" y="680.5" width="9.63" height="9.5" fill="#de8787"/><rect x="116.33" y="680.5" width="9.63" height="9.5" fill="#e9afaf"/><rect x="125.67" y="680.5" width="9.63" height="9.5" fill="#f4d7d7"/><rect x="135.00" y="680.5" width="9.73" height="9.5" fill="#241c1c"/><rect x="144.43" y="680.5" width="9.73" height="9.5" fill="#483737"/><rect x="153.86" y="680.5" width="9.73" height="9.5" fill="#6c5353"/><rect x="163.29" y="680.5" width="9.73" height="9.5" fill="#916f6f"/><rect x="172.71" y="680.5" width="9.73" height="9.5" fill="#ac9393"/><rect x="182.14" y="680.5" width="9.73" height="9.5" fill="#c8b7b7"/><rect x="191.57" y="680.5" width="9.73" height="9.5" fill="#e3dbdb"/><rect x="201.00" y="680.5" width="9.57" height="9.5" fill="#2b1100"/><rect x="210.27" y="680.5" width="9.57" height="9.5" fill="#552200"/><rect x="219.55" y="680.5" width="9.57" height="9.5" fill="#803300"/><rect x="228.82" y="680.5" width="9.57" height="9.5" fill="#aa4400"/><rect x="238.09" y="680.5" width="9.57" height="9.5" fill="#d45500"/><rect x="247.36" y="680.5" width="9.57" height="9.5" fill="#ff6600"/><rect x="256.64" y="680.5" width="9.57" height="9.5" fill="#ff7f2a"/><rect x="265.91" y="680.5" width="9.57" height="9.5" fill="#ff9955"/><rect x="275.18" y="680.5" width="9.57" height="9.5" fill="#ffb380"/><rect x="284.45" y="680.5" width="9.57" height="9.5" fill="#ffccaa"/><rect x="293.73" y="680.5" width="9.57" height="9.5" fill="#ffe6d5"/><rect x="303.00" y="680.5" width="9.63" height="9.5" fill="#28170b"/><rect x="312.33" y="680.5" width="9.63" height="9.5" fill="#502d16"/><rect x="321.67" y="680.5" width="9.63" height="9.5" fill="#784421"/><rect x="331.00" y="680.5" width="9.63" height="9.5" fill="#a05a2c"/><rect x="340.33" y="680.5" width="9.63" height="9.5" fill="#c87137"/><rect x="349.67" y="680.5" width="9.63" height="9.5" fill="#d38d5f"/><rect x="359.00" y="680.5" width="9.63" height="9.5" fill="#deaa87"/><rect x="368.33" y="680.5" width="9.63" height="9.5" fill="#e9c6af"/><rect x="377.67" y="680.5" width="9.63" height="9.5" fill="#f4e3d7"/><rect x="387.00" y="680.5" width="9.73" height="9.5" fill="#241f1c"/><rect x="396.43" y="680.5" width="9.73" height="9.5" fill="#483e37"/><rect x="405.86" y="680.5" width="9.73" height="9.5" fill="#6c5d53"/><rect x="415.29" y="680.5" width="9.73" height="9.5" fill="#917c6f"/><rect x="424.71" y="680.5" width="9.73" height="9.5" fill="#ac9d93"/><rect x="434.14" y="680.5" width="9.73" height="9.5" fill="#c8beb7"/><rect x="443.57" y="680.5" width="9.73" height="9.5" fill="#e3dedb"/><rect x="453.00" y="680.5" width="9.57" height="9.5" fill="#2b2200"/><rect x="462.27" y="680.5" width="9.57" height="9.5" fill="#554400"/><rect x="471.55" y="680.5" width="9.57" height="9.5" fill="#806600"/><rect x="480.82" y="680.5" width="9.57" height="9.5" fill="#aa8800"/><rect x="490.09" y="680.5" width="9.57" height="9.5" fill="#d4aa00"/><rect x="499.36" y="680.5" width="9.57" height="9.5" fill="#ffcc00"/><rect x="508.64" y="680.5" width="9.57" height="9.5" fill="#ffd42a"/><rect x="517.91" y="680.5" width="9.57" height="9.5" fill="#ffdd55"/><rect x="527.18" y="680.5" width="9.57" height="9.5" fill="#ffe680"/><rect x="536.45" y="680.5" width="9.57" height="9.5" fill="#ffeeaa"/><rect x="545.73" y="680.5" width="9.57" height="9.5" fill="#fff6d5"/><rect x="555.00" y="680.5" width="9.63" height="9.5" fill="#28220b"/><rect x="564.33" y="680.5" width="9.63" height="9.5" fill="#504416"/><rect x="573.67" y="680.5" width="9.63" height="9.5" fill="#786721"/><rect x="583.00" y="680.5" width="9.63" height="9.5" fill="#a0892c"/><rect x="592.33" y="680.5" width="9.63" height="9.5" fill="#c8ab37"/><rect x="601.67" y="680.5" width="9.63" height="9.5" fill="#d3bc5f"/><rect x="611.00" y="680.5" width="9.63" height="9.5" fill="#decd87"/><rect x="620.33" y="680.5" width="9.63" height="9.5" fill="#e9ddaf"/><rect x="629.67" y="680.5" width="9.63" height="9.5" fill="#f4eed7"/><rect x="639.00" y="680.5" width="9.73" height="9.5" fill="#24221c"/><rect x="648.43" y="680.5" width="9.73" height="9.5" fill="#48443e"/><rect x="657.86" y="680.5" width="9.73" height="9.5" fill="#6c6753"/><rect x="667.29" y="680.5" width="9.73" height="9.5" fill="#918a6f"/><rect x="676.71" y="680.5" width="9.73" height="9.5" fill="#aca793"/><rect x="686.14" y="680.5" width="9.73" height="9.5" fill="#c8c4b7"/><rect x="695.57" y="680.5" width="9.73" height="9.5" fill="#e3e2db"/><rect x="705.00" y="680.5" width="9.57" height="9.5" fill="#222b00"/><rect x="714.27" y="680.5" width="9.57" height="9.5" fill="#445500"/><rect x="723.55" y="680.5" width="9.57" height="9.5" fill="#668000"/><rect x="732.82" y="680.5" width="9.57" height="9.5" fill="#88aa00"/><rect x="742.09" y="680.5" width="9.57" height="9.5" fill="#aad400"/><rect x="751.36" y="680.5" width="9.57" height="9.5" fill="#ccff00"/><rect x="760.64" y="680.5" width="9.57" height="9.5" fill="#d4ff2a"/><rect x="769.91" y="680.5" width="9.57" height="9.5" fill="#ddff55"/><rect x="779.18" y="680.5" width="9.57" height="9.5" fill="#e5ff80"/><rect x="788.45" y="680.5" width="9.57" height="9.5" fill="#eeffaa"/><rect x="797.73" y="680.5" width="9.57" height="9.5" fill="#f6ffd5"/><rect x="807.00" y="680.5" width="9.63" height="9.5" fill="#22280b"/><rect x="816.33" y="680.5" width="9.63" height="9.5" fill="#445016"/><rect x="825.67" y="680.5" width="9.63" height="9.5" fill="#677821"/><rect x="835.00" y="680.5" width="9.63" height="9.5" fill="#89a02c"/><rect x="844.33" y="680.5" width="9.63" height="9.5" fill="#abc837"/><rect x="853.67" y="680.5" width="9.63" height="9.5" fill="#bcd35f"/><rect x="863.00" y="680.5" width="9.63" height="9.5" fill="#cdde87"/><rect x="872.33" y="680.5" width="9.63" height="9.5" fill="#dde9af"/><rect x="881.67" y="680.5" width="9.63" height="9.5" fill="#eef4d7"/><rect x="891.00" y="680.5" width="9.73" height="9.5" fill="#22241c"/><rect x="900.43" y="680.5" width="9.73" height="9.5" fill="#43483e"/><rect x="909.86" y="680.5" width="9.73" height="9.5" fill="#656c53"/><rect x="919.29" y="680.5" width="9.73" height="9.5" fill="#87916f"/><rect x="928.71" y="680.5" width="9.73" height="9.5" fill="#a5ac93"/><rect x="938.14" y="680.5" width="9.73" height="9.5" fill="#c4c8b7"/><rect x="947.57" y="680.5" width="9.73" height="9.5" fill="#e2e3db"/><rect x="957.00" y="680.5" width="9.57" height="9.5" fill="#112b00"/><rect x="966.27" y="680.5" width="9.57" height="9.5" fill="#225500"/><rect x="975.55" y="680.5" width="9.57" height="9.5" fill="#338000"/><rect x="984.82" y="680.5" width="9.57" height="9.5" fill="#44aa00"/><rect x="994.09" y="680.5" width="9.57" height="9.5" fill="#55d400"/><rect x="1003.36" y="680.5" width="9.57" height="9.5" fill="#66ff00"/><rect x="1012.64" y="680.5" width="9.57" height="9.5" fill="#7fff2a"/><rect x="1021.91" y="680.5" width="9.57" height="9.5" fill="#99ff55"/><rect x="1031.18" y="680.5" width="9.57" height="9.5" fill="#b3ff80"/><rect x="1040.45" y="680.5" width="9.57" height="9.5" fill="#ccffaa"/><rect x="1049.73" y="680.5" width="9.57" height="9.5" fill="#e6ffd5"/><rect x="1059.00" y="680.5" width="9.63" height="9.5" fill="#1a280b"/><rect x="1068.33" y="680.5" width="9.63" height="9.5" fill="#2d5016"/><rect x="1077.67" y="680.5" width="9.63" height="9.5" fill="#447821"/><rect x="1087.00" y="680.5" width="9.63" height="9.5" fill="#5aa02c"/><rect x="1096.33" y="680.5" width="9.63" height="9.5" fill="#71c837"/><rect x="1105.67" y="680.5" width="9.63" height="9.5" fill="#8dd35f"/><rect x="1115.00" y="680.5" width="9.63" height="9.5" fill="#aade87"/><rect x="1124.33" y="680.5" width="9.63" height="9.5" fill="#c6e9af"/><rect x="1133.67" y="680.5" width="9.63" height="9.5" fill="#e3f4d7"/><rect x="1143.00" y="680.5" width="9.73" height="9.5" fill="#1f241c"/><rect x="1152.43" y="680.5" width="9.73" height="9.5" fill="#3e483e"/><rect x="1161.86" y="680.5" width="9.73" height="9.5" fill="#5d6c53"/><rect x="1171.29" y="680.5" width="9.73" height="9.5" fill="#7c916f"/><rect x="1180.71" y="680.5" width="9.73" height="9.5" fill="#9dac93"/><rect x="1190.14" y="680.5" width="9.73" height="9.5" fill="#bec8b7"/><rect x="1199.57" y="680.5" width="9.73" height="9.5" fill="#dee3db"/><rect x="1209.00" y="680.5" width="9.44" height="9.5" fill="#002b00"/><rect x="1218.14" y="680.5" width="9.44" height="9.5" fill="#005500"/><rect x="1227.29" y="680.5" width="9.44" height="9.5" fill="#008000"/><rect x="1236.43" y="680.5" width="9.44" height="9.5" fill="#00aa00"/><rect x="1245.57" y="680.5" width="9.44" height="9.5" fill="#00d400"/><rect x="1254.71" y="680.5" width="9.44" height="9.5" fill="#00ff00"/><rect x="1263.86" y="680.5" width="9.44" height="9.5" fill="#2aff2a"/><path d="M1 680.2 H1273" stroke="#222" stroke-width="1" opacity="0.85"/><path d="M1278 682 L1275 685 L1278 688Z" fill="#111"/></svg><div class="a" style="left:0px;top:691px;width:1280px;height:11px;background:#f0f0f0"></div><div class="a" style="left:106px;top:693px;width:394px;height:9px;background:#cdcdcd"></div><svg style="left:2px;top:694px" width="7" height="7" viewBox="0 0 7 7"><path d="M5 0.5 L1.5 3.5 L5 6.5" fill="none" stroke="#444" stroke-width="1.2"/></svg><svg style="left:1265px;top:694px" width="7" height="7" viewBox="0 0 7 7"><path d="M1.5 0.5 L5 3.5 L1.5 6.5" fill="none" stroke="#444" stroke-width="1.2"/></svg><div class="a" style="left:0px;top:702px;width:1280px;height:18px;background:#f0f0f0"></div><div class="t" style="left:2.0px;top:701.40px;font-size:8.36px;line-height:12px;transform:scaleX(0.9091);transform-origin:0 0;color:#222;">Fill:</div><div class="t" style="left:2.0px;top:709.40px;font-size:8.36px;line-height:12px;transform:scaleX(0.9091);transform-origin:0 0;color:#222;">Stroke:</div><div class="t" style="left:48.0px;top:701.40px;font-size:8.36px;line-height:12px;transform:scaleX(0.9091);transform-origin:0 0;color:#222;">N/A</div><div class="t" style="left:48.0px;top:709.40px;font-size:8.36px;line-height:12px;transform:scaleX(0.9091);transform-origin:0 0;color:#222;">N/A</div><div class="t" style="left:84.0px;top:706.10px;font-size:8.36px;line-height:12px;transform:scaleX(0.9091);transform-origin:0 0;color:#222;">O:</div><div class="inp" style="left:93px;top:704px;width:25px;height:13px;border-color:#d6d6d6"></div><div class="t" style="left:96.0px;top:705.68px;font-size:8.14px;line-height:12px;transform:scaleX(0.9091);transform-origin:0 0;color:#bbb;">0</div><div class="a" style="left:118px;top:704px;width:7px;height:13px;background:linear-gradient(#f4f4f4,#e4e4e4);border:1px solid #d0d0d0"></div><svg style="left:118px;top:704px" width="7" height="13" viewBox="0 0 7 13"><path d="M1.7 5.0 L3.5 3.0 L5.3 5.0Z M1.7 8.0 L3.5 10.0 L5.3 8.0Z" fill="#bbb"/></svg><div class="a" style="left:127px;top:704px;width:1px;height:13px;background:#d4d4d4"></div><svg style="left:129.5px;top:707px" width="8" height="7" viewBox="0 0 8 7"><path d="M0.5 3.5 Q4 0 7.5 3.5 Q4 7 0.5 3.5Z" fill="#444"/><circle cx="4" cy="3.5" r="1.3" fill="#ddd"/></svg><svg style="left:140.5px;top:706.5px" width="6" height="8" viewBox="0 0 6 8"><rect x="0.5" y="3.5" width="5" height="4" fill="#999"/><path d="M1.5 3.5 V2 Q3 0 4.5 2 V3.5" fill="none" stroke="#999"/></svg><div class="inp" style="left:149px;top:704px;width:46px;height:14px;border-color:#d0d0d0"></div><div class="t" style="left:152.0px;top:706.41px;font-size:7.48px;line-height:12px;transform:scaleX(0.9091);transform-origin:0 0;font-weight:bold;color:#111;">•Layer 1</div><div class="a" style="left:183.5px;top:704px;width:11px;height:14px;background:linear-gradient(#f5f5f5,#e6e6e6);border:1px solid #cfcfcf"></div><svg style="left:185px;top:708px" width="8" height="5" viewBox="0 0 8 5"><path d="M1 1 L4 4 L7 1" fill="none" stroke="#333" stroke-width="1.1"/></svg><div class="a" style="left:196.5px;top:703px;width:1px;height:16px;background:#d4d4d4"></div><div class="t" style="left:198.2px;top:704.6px;font-size:8.52px;line-height:12px;color:#111;transform:scaleX(0.9091);transform-origin:0 0"><b>Drag</b> to create an ellipse. <b>Drag controls</b> to make an arc or segment. <b>Click</b> to select.</div><div class="a" style="left:1173.5px;top:703px;width:1px;height:16px;background:#d4d4d4"></div><div class="t" style="left:1176px;top:702.5px;font-family:'Liberation Mono';font-size:6.6px;line-height:9.5px;color:#222;transform:scaleX(0.95);transform-origin:0 0">X: 1470.78<br>Y: 1503.11</div><div class="t" style="left:1222.4px;top:706.10px;font-size:8.36px;line-height:12px;transform:scaleX(0.9091);transform-origin:0 0;color:#222;">Z:</div><div class="inp" style="left:1229px;top:704.5px;width:31px;height:13px;border-color:#d0d0d0"></div><div class="t" style="left:1235.0px;top:706.18px;font-size:8.14px;line-height:12px;transform:scaleX(0.9091);transform-origin:0 0;color:#111;">6.2%</div><div class="a" style="left:1260px;top:704.5px;width:7px;height:13px;background:linear-gradient(#f4f4f4,#e4e4e4);border:1px solid #d0d0d0"></div><svg style="left:1260px;top:704.5px" width="7" height="13" viewBox="0 0 7 13"><path d="M1.7 5.0 L3.5 3.0 L5.3 5.0Z M1.7 8.0 L3.5 10.0 L5.3 8.0Z" fill="#333"/></svg><div class="a" style="left:0px;top:718.5px;width:1280px;height:1.5px;background:#8e8b92"></div><div class="a" style="left:1058px;top:69px;width:222px;height:611px;background:#f0f0f0"></div><div class="a" style="left:1060px;top:71px;width:198px;height:608px;background:#efefef;border-left:1.2px solid #2e2e2e;border-top:1.2px solid #2e2e2e"></div><div class="a" style="left:1061px;top:72px;width:197px;height:15px;background:#f3f3f3;border-bottom:1px solid #dadada"></div><svg style="left:1062px;top:74px" width="9" height="11" viewBox="0 0 9 11"><rect x="1" y="1" width="1" height="9" fill="#777"/><rect x="2" y="2" width="4" height="2.5" fill="#aab" stroke="#666" stroke-width="0.5"/><rect x="2" y="6" width="6" height="2.5" fill="#aab" stroke="#666" stroke-width="0.5"/></svg><div class="t" style="left:1070.0px;top:73.75px;font-size:8.80px;line-height:12px;transform:scaleX(0.9091);transform-origin:0 0;color:#1e1e1e;">Align and Distribute (Shift+Ctrl+A)</div><svg style="left:1232.5px;top:76px" width="8" height="7" viewBox="0 0 8 7"><rect x="0.5" y="0.5" width="7" height="6" fill="#f4f4f4" stroke="#8a8a8a" stroke-width="0.8"/><path d="M5 1.8 L2.5 3.5 L5 5.2Z" fill="#555"/></svg><svg style="left:1246.5px;top:76px" width="8" height="7" viewBox="0 0 8 7"><rect x="0.5" y="0.5" width="7" height="6" fill="#f4f4f4" stroke="#8a8a8a" stroke-width="0.8"/><path d="M2.3 1.8 L5.7 5.2 M5.7 1.8 L2.3 5.2" stroke="#444" stroke-width="0.9"/></svg><div class="t" style="left:1067.6px;top:89.29px;font-size:8.69px;line-height:12px;transform:scaleX(0.9091);transform-origin:0 0;font-weight:bold;color:#1e1e1e;">Align</div><div class="t" style="left:1126.7px;top:103.60px;font-size:8.36px;line-height:12px;transform:scaleX(0.9091);transform-origin:0 0;color:#1e1e1e;">Relative to:</div><div class="inp" style="left:1167.4px;top:103px;width:85px;height:13.5px;border-color:#bdbdbd"></div><div class="t" style="left:1169.8px;top:104.14px;font-size:8.25px;line-height:12px;transform:scaleX(0.9091);transform-origin:0 0;color:#111;">Last selected</div><div class="a" style="left:1241.3px;top:103px;width:11.1px;height:13.5px;background:linear-gradient(#f4f4f4,#e2e2e2);border:1px solid #bdbdbd"></div><svg style="left:1243.5px;top:107px" width="7" height="5" viewBox="0 0 7 5"><path d="M1 1 L3.5 3.5 L6 1" fill="none" stroke="#333" stroke-width="1"/></svg><div class="t" style="left:1151.6px;top:118.33px;font-size:8.58px;line-height:12px;transform:scaleX(0.9091);transform-origin:0 0;color:#1e1e1e;">Treat selection as group:</div><div class="a" style="left:1151.6px;top:127.6px;width:4px;height:0.8px;background:#333"></div><div class="chk" style="left:1242.2px;top:119.7px;width:8.5px;height:8px;border-color:#555"></div><svg style="left:1120.3px;top:133.5px" width="17" height="17" viewBox="0 0 17 17"><rect x="1.5" y="3.5" width="11" height="4" fill="#d3dce4" stroke="#555" stroke-width="0.9"/><rect x="6.5" y="7.5" width="6" height="3" fill="#d3dce4" stroke="#555" stroke-width="0.9"/><rect x="3.5" y="11.5" width="9" height="4" fill="#d3dce4" stroke="#555" stroke-width="0.9"/><path d="M13 1 V16" stroke="#b04848" stroke-width="0.8"/><rect x="12.5" y="0.5" width="4" height="3.5" fill="#f3dc8a" stroke="#6a5a20" stroke-width="0.8"/></svg><svg style="left:1142.8px;top:133.5px" width="17" height="17" viewBox="0 0 17 17"><path d="M1.5 1 V16" stroke="#444"/><rect x="1.5" y="1.5" width="13" height="5" fill="#d3dce4" stroke="#555" stroke-width="0.9"/><rect x="1.5" y="7.5" width="8" height="4" fill="#d3dce4" stroke="#555" stroke-width="0.9"/><path d="M3 15 H11" stroke="#222"/><circle cx="3" cy="15" r="1" fill="#222"/></svg><svg style="left:1166px;top:133.5px" width="17" height="17" viewBox="0 0 17 17"><rect x="1.5" y="1.5" width="13" height="5" fill="#d3dce4" stroke="#555" stroke-width="0.9"/><rect x="4.5" y="8.5" width="8" height="4" fill="#d3dce4" stroke="#555" stroke-width="0.9"/><path d="M8.5 0 V16" stroke="#b04848" stroke-width="0.8"/><path d="M3 15 H14" stroke="#222"/></svg><svg style="left:1188.8px;top:133.5px" width="17" height="17" viewBox="0 0 17 17"><path d="M14.5 1 V16" stroke="#444"/><rect x="1.5" y="1.5" width="13" height="5" fill="#d3dce4" stroke="#555" stroke-width="0.9"/><rect x="7.5" y="7.5" width="7" height="4" fill="#d3dce4" stroke="#555" stroke-width="0.9"/><path d="M5 15 H13" stroke="#222"/><circle cx="13" cy="15" r="1" fill="#222"/></svg><svg style="left:1211.4px;top:133.5px" width="17" height="17" viewBox="0 0 17 17"><path d="M3.5 1 V16" stroke="#b04848" stroke-width="0.8"/><rect x="0.5" y="0.5" width="3.5" height="3.5" fill="#f3dc8a" stroke="#6a5a20" stroke-width="0.8"/><rect x="4.5" y="3.5" width="11" height="4" fill="#d3dce4" stroke="#555" stroke-width="0.9"/><rect x="4.5" y="7.5" width="6" height="3" fill="#d3dce4" stroke="#555" stroke-width="0.9"/><rect x="4.5" y="11.5" width="8" height="4" fill="#d3dce4" stroke="#555" stroke-width="0.9"/></svg><svg style="left:1234.9px;top:133.5px" width="17" height="17" viewBox="0 0 17 17"><path d="M3.5 1 V16" stroke="#c08080" stroke-width="0.6"/><text x="4" y="8" font-family="Liberation Serif" font-weight="bold" font-size="9" fill="#222">a</text><text x="2" y="14.5" font-family="Liberation Serif" font-weight="bold" font-size="12" fill="#222">y</text></svg><svg style="left:1120.3px;top:156.5px" width="17" height="17" viewBox="0 0 17 17"><rect x="1.5" y="6.5" width="4" height="9" fill="#d3dce4" stroke="#555" stroke-width="0.9"/><rect x="5.5" y="10.5" width="4" height="5" fill="#d3dce4" stroke="#555" stroke-width="0.9"/><rect x="9.5" y="1.5" width="4" height="14" fill="#d3dce4" stroke="#555" stroke-width="0.9"/><path d="M0 15.5 H15" stroke="#b04848" stroke-width="0.8"/><rect x="13" y="12.5" width="3.5" height="3.5" fill="#f3dc8a" stroke="#6a5a20" stroke-width="0.8"/></svg><svg style="left:1142.8px;top:156.5px" width="17" height="17" viewBox="0 0 17 17"><path d="M1 1.5 H16" stroke="#444"/><rect x="1.5" y="1.5" width="3" height="10" fill="#c6cacd" stroke="#5a5a5a" stroke-width="0.9"/><rect x="5.5" y="1.5" width="4" height="7" fill="#d3dce4" stroke="#555" stroke-width="0.9"/><rect x="10.5" y="1.5" width="5" height="14" fill="#d3dce4" stroke="#555" stroke-width="0.9"/></svg><svg style="left:1166px;top:156.5px" width="17" height="17" viewBox="0 0 17 17"><path d="M1 1 V15" stroke="#222"/><rect x="3.5" y="4.5" width="4" height="8" fill="#d3dce4" stroke="#555" stroke-width="0.9"/><rect x="8.5" y="1.5" width="5" height="14" fill="#d3dce4" stroke="#555" stroke-width="0.9"/><path d="M0 8.5 H16" stroke="#b04848" stroke-width="0.8"/></svg><svg style="left:1188.8px;top:156.5px" width="17" height="17" viewBox="0 0 17 17"><path d="M1 3 V15" stroke="#222"/><rect x="3.5" y="8.5" width="3" height="7" fill="#c6cacd" stroke="#5a5a5a" stroke-width="0.9"/><rect x="7.5" y="10.5" width="3" height="5" fill="#d3dce4" stroke="#555" stroke-width="0.9"/><rect x="10.5" y="1.5" width="5" height="14" fill="#d3dce4" stroke="#555" stroke-width="0.9"/><path d="M0 15.5 H16" stroke="#b04848" stroke-width="0.8"/></svg><svg style="left:1211.4px;top:156.5px" width="17" height="17" viewBox="0 0 17 17"><path d="M0 4 H13" stroke="#b04848" stroke-width="0.8"/><rect x="1.5" y="4.5" width="3" height="9" fill="#d3dce4" stroke="#555" stroke-width="0.9"/><rect x="5.5" y="4.5" width="3" height="5" fill="#d3dce4" stroke="#555" stroke-width="0.9"/><rect x="9.5" y="4.5" width="4" height="11" fill="#d3dce4" stroke="#555" stroke-width="0.9"/><rect x="12" y="1" width="3.5" height="3.5" fill="#f3dc8a" stroke="#6a5a20" stroke-width="0.8"/></svg><svg style="left:1234.9px;top:156.5px" width="17" height="17" viewBox="0 0 17 17"><path d="M0 10.5 H16" stroke="#c08080" stroke-width="0.6"/><text x="0.5" y="11" font-family="Liberation Serif" font-weight="bold" font-size="12" fill="#222">y</text><text x="8" y="11" font-family="Liberation Serif" font-weight="bold" font-size="10" fill="#222">a</text></svg><div class="t" style="left:1067.8px;top:179.69px;font-size:8.69px;line-height:12px;transform:scaleX(0.9091);transform-origin:0 0;font-weight:bold;color:#1e1e1e;">Distribute</div><svg style="left:1142.8px;top:195.5px" width="17" height="17" viewBox="0 0 17 17"><path d="M1 1.5 H8" stroke="#444"/><rect x="1.5" y="4.5" width="3" height="11" fill="#c6cacd" stroke="#5a5a5a" stroke-width="0.9"/><rect x="5.5" y="2.5" width="3" height="6" fill="#d3dce4" stroke="#555" stroke-width="0.9"/><rect x="10.5" y="3.5" width="4" height="5" fill="#d3dce4" stroke="#555" stroke-width="0.9"/></svg><svg style="left:1166.25px;top:195.5px" width="17" height="17" viewBox="0 0 17 17"><path d="M2 1.5 H14" stroke="#b04848" stroke-width="0.8"/><rect x="1.5" y="3.5" width="3" height="5" fill="#d3dce4" stroke="#555" stroke-width="0.9"/><rect x="5.5" y="3.5" width="4" height="12" fill="#d3dce4" stroke="#555" stroke-width="0.9"/><rect x="11.5" y="5.5" width="3" height="9" fill="#c6cacd" stroke="#5a5a5a" stroke-width="0.9"/></svg><svg style="left:1188.9px;top:195.5px" width="17" height="17" viewBox="0 0 17 17"><path d="M2 1.5 H14" stroke="#444"/><rect x="1.5" y="5.5" width="3" height="10" fill="#c6cacd" stroke="#5a5a5a" stroke-width="0.9"/><rect x="5.5" y="2.5" width="3" height="6" fill="#d3dce4" stroke="#555" stroke-width="0.9"/><rect x="10.5" y="2.5" width="4" height="6" fill="#d3dce4" stroke="#555" stroke-width="0.9"/></svg><svg style="left:1211.25px;top:195.5px" width="17" height="17" viewBox="0 0 17 17"><path d="M2 1.5 H14" stroke="#b04848" stroke-width="0.8"/><rect x="1.5" y="2.5" width="3" height="12" fill="#d3dce4" stroke="#555" stroke-width="0.9"/><rect x="6.5" y="2.5" width="3" height="6" fill="#d3dce4" stroke="#555" stroke-width="0.9"/><rect x="11.5" y="5.5" width="3" height="10" fill="#c6cacd" stroke="#5a5a5a" stroke-width="0.9"/></svg><svg style="left:1233.75px;top:195.5px" width="17" height="17" viewBox="0 0 17 17"><path d="M1 2 H10" stroke="#222"/><path d="M1.5 1 V16" stroke="#b04848" stroke-width="0.7"/><text x="2" y="12" font-family="Liberation Serif" font-weight="bold" font-size="9" fill="#222">a</text><text x="8" y="12" font-family="Liberation Serif" font-weight="bold" font-size="10" fill="#222">y</text></svg><svg style="left:1142.8px;top:218px" width="17" height="17" viewBox="0 0 17 17"><path d="M1.5 1 V11" stroke="#444"/><rect x="3.5" y="1.5" width="5" height="4" fill="#d3dce4" stroke="#555" stroke-width="0.9"/><rect x="3.5" y="7.5" width="6" height="3" fill="#c6cacd" stroke="#5a5a5a" stroke-width="0.9"/><rect x="4.5" y="12.5" width="11" height="4" fill="#d3dce4" stroke="#555" stroke-width="0.9"/></svg><svg style="left:1166.25px;top:218px" width="17" height="17" viewBox="0 0 17 17"><path d="M1.5 3 V14" stroke="#b04848" stroke-width="0.8"/><rect x="6.5" y="1.5" width="8" height="3" fill="#d3dce4" stroke="#555" stroke-width="0.9"/><rect x="4.5" y="6.5" width="11" height="4" fill="#d3dce4" stroke="#555" stroke-width="0.9"/><rect x="6.5" y="12.5" width="6" height="3" fill="#d3dce4" stroke="#555" stroke-width="0.9"/></svg><svg style="left:1188.9px;top:218px" width="17" height="17" viewBox="0 0 17 17"><path d="M1.5 1 V16 H16" stroke="#444" fill="none"/><rect x="4.5" y="1.5" width="5" height="3" fill="#d3dce4" stroke="#555" stroke-width="0.9"/><rect x="5.5" y="7.5" width="8" height="3" fill="#d3dce4" stroke="#555" stroke-width="0.9"/><rect x="3.5" y="12.5" width="12" height="3" fill="#c6cacd" stroke="#5a5a5a" stroke-width="0.9"/></svg><svg style="left:1211.25px;top:218px" width="17" height="17" viewBox="0 0 17 17"><path d="M1.5 3 V15" stroke="#b04848" stroke-width="0.8"/><rect x="4.5" y="1.5" width="11" height="3" fill="#c6cacd" stroke="#5a5a5a" stroke-width="0.9"/><rect x="3.5" y="7.5" width="10" height="3" fill="#d3dce4" stroke="#555" stroke-width="0.9"/><rect x="5.5" y="12.5" width="10" height="3" fill="#d3dce4" stroke="#555" stroke-width="0.9"/></svg><svg style="left:1233.75px;top:218px" width="17" height="17" viewBox="0 0 17 17"><path d="M1 6 H16 M1 16 H16" stroke="#b04848" stroke-width="0.7"/><path d="M2 7 V16" stroke="#222"/><text x="7" y="8" font-family="Liberation Serif" font-weight="bold" font-size="8" fill="#222">y</text><text x="6" y="15.5" font-family="Liberation Serif" font-weight="bold" font-size="9" fill="#222">a</text></svg><div class="t" style="left:1067.8px;top:241.69px;font-size:8.69px;line-height:12px;transform:scaleX(0.9091);transform-origin:0 0;font-weight:bold;color:#1e1e1e;">Rearrange</div><svg style="left:1121px;top:257.5px" width="17" height="17" viewBox="0 0 17 17"><path d="M2 12 L3 6 L7 3 L10 6 L14 3 M10 6 L14 12" fill="none" stroke="#b8bcc4" stroke-width="1.5"/></svg><svg style="left:1143.6px;top:257.5px" width="17" height="17" viewBox="0 0 17 17"><rect x="1.5" y="1.5" width="6" height="6" fill="#d3dce4" stroke="#555" stroke-width="0.9"/><rect x="8.5" y="8.5" width="6" height="6" fill="#d3dce4" stroke="#555" stroke-width="0.9"/><path d="M5 7 V11 H8 M8 4 H11 V8" fill="none" stroke="#111" stroke-width="1.2"/></svg><svg style="left:1166.25px;top:257.5px" width="17" height="17" viewBox="0 0 17 17"><rect x="1.5" y="1.5" width="6" height="6" fill="#c6cacd" stroke="#5a5a5a" stroke-width="0.9"/><rect x="8.5" y="5.5" width="6" height="6" fill="#d3dce4" stroke="#555" stroke-width="0.9"/><path d="M3 12 L6 9 L9 12 L6 15Z" fill="#a02828"/></svg><svg style="left:1189px;top:257.5px" width="17" height="17" viewBox="0 0 17 17"><rect x="1.5" y="1.5" width="6" height="6" fill="#d3dce4" stroke="#555" stroke-width="0.9"/><rect x="8.5" y="5.5" width="6" height="6" fill="#d3dce4" stroke="#555" stroke-width="0.9"/><circle cx="6" cy="12" r="3" fill="none" stroke="#e07070" stroke-width="1.2"/></svg><svg style="left:1210.8px;top:257.5px" width="17" height="17" viewBox="0 0 17 17"><rect x="1.5" y="2.5" width="3" height="3" fill="#f3dc8a" stroke="#6a5a20" stroke-width="0.8"/><rect x="7.5" y="0.5" width="3" height="3" fill="#f3dc8a" stroke="#6a5a20" stroke-width="0.8"/><rect x="12.5" y="5.5" width="3" height="3" fill="#f3dc8a" stroke="#6a5a20" stroke-width="0.8"/><rect x="7.5" y="7.5" width="3" height="3" fill="#f3dc8a" stroke="#6a5a20" stroke-width="0.8"/><rect x="1.5" y="11.5" width="3" height="3" fill="#f3dc8a" stroke="#6a5a20" stroke-width="0.8"/><rect x="7.5" y="11.5" width="3" height="3" fill="#f3dc8a" stroke="#6a5a20" stroke-width="0.8"/></svg><svg style="left:1233.4px;top:257.5px" width="17" height="17" viewBox="0 0 17 17"><path d="M4 7 L13 3 M4 7 L13 13 M13 3 V13" stroke="#d08080" stroke-width="0.9"/><rect x="0.5" y="5.5" width="5" height="4" fill="#f3dc8a" stroke="#6a5a20" stroke-width="0.8"/><rect x="11.5" y="1.5" width="3.5" height="4" fill="#f3dc8a" stroke="#6a5a20" stroke-width="0.8"/><rect x="11.5" y="11.5" width="3.5" height="3.5" fill="#f3dc8a" stroke="#6a5a20" stroke-width="0.8"/></svg><div class="t" style="left:1067.8px;top:280.89px;font-size:8.69px;line-height:12px;transform:scaleX(0.9091);transform-origin:0 0;font-weight:bold;color:#1e1e1e;">Remove overlaps</div><div class="t" style="left:1128.0px;top:300.10px;font-size:8.36px;line-height:12px;transform:scaleX(0.9091);transform-origin:0 0;color:#444;">H:</div><div class="inp" style="left:1138px;top:297.7px;width:32.2px;height:14.8px;border-color:#c8c8c8"></div><div class="t" style="left:1140.5px;top:300.10px;font-size:8.36px;line-height:12px;transform:scaleX(0.9091);transform-origin:0 0;color:#222;">0.0</div><div class="a" style="left:1170.2px;top:297.7px;width:7px;height:14.8px;background:linear-gradient(#f4f4f4,#e4e4e4);border:1px solid #d0d0d0"></div><svg style="left:1170.2px;top:297.7px" width="7" height="14.8" viewBox="0 0 7 14.8"><path d="M1.7 5.9 L3.5 3.9000000000000004 L5.3 5.9Z M1.7 8.9 L3.5 10.9 L5.3 8.9Z" fill="#333"/></svg><div class="t" style="left:1180.3px;top:300.10px;font-size:8.36px;line-height:12px;transform:scaleX(0.9091);transform-origin:0 0;color:#444;">V:</div><div class="inp" style="left:1189px;top:297.7px;width:32px;height:14.8px;border-color:#c8c8c8"></div><div class="t" style="left:1191.5px;top:300.10px;font-size:8.36px;line-height:12px;transform:scaleX(0.9091);transform-origin:0 0;color:#222;">0.0</div><div class="a" style="left:1221px;top:297.7px;width:7px;height:14.8px;background:linear-gradient(#f4f4f4,#e4e4e4);border:1px solid #d0d0d0"></div><svg style="left:1221px;top:297.7px" width="7" height="14.8" viewBox="0 0 7 14.8"><path d="M1.7 5.9 L3.5 3.9000000000000004 L5.3 5.9Z M1.7 8.9 L3.5 10.9 L5.3 8.9Z" fill="#333"/></svg><svg style="left:1234px;top:297.5px" width="16" height="15" viewBox="0 0 16 15"><rect x="0" y="0" width="16" height="15" fill="#b8bec2"/><path d="M4 0 V15 M12 0 V15" stroke="#9aa0a4" stroke-width="1.5"/><path d="M6 3 V12 M10 3 V12" stroke="#d0d4d6" stroke-width="1"/></svg><div class="a" style="left:1063px;top:322px;width:194px;height:13.3px;background:linear-gradient(#e4f1fb,#cfe6f8);border:1px solid #9cc8ee"></div><svg style="left:1065px;top:324px" width="9" height="10" viewBox="0 0 9 10"><rect x="0.5" y="0.5" width="1" height="9" fill="#888"/><rect x="2" y="2" width="5" height="2.5" fill="#bbc" stroke="#777" stroke-width="0.5"/><rect x="2" y="6" width="6" height="2.5" fill="#bbc" stroke="#777" stroke-width="0.5"/></svg><div class="t" style="left:1074.8px;top:323.29px;font-size:8.69px;line-height:12px;transform:scaleX(0.9091);transform-origin:0 0;color:#1e1e1e;">Align and Distribute (Shift+Ctrl+A)</div><svg style="left:1247px;top:325px" width="7" height="5" viewBox="0 0 7 5"><path d="M0.5 4.5 L3.5 1 L6.5 4.5Z" fill="#222"/></svg><div class="a" style="left:1062.7px;top:337px;width:193.3px;height:12.7px;background:linear-gradient(#f4f4f4,#e8e8e8);border:1px solid #cfcfcf"></div><svg style="left:1064.5px;top:338.5px" width="9" height="10" viewBox="0 0 9 10"><path d="M0.5 1 H8.5 L6 9 H0.5Z" fill="#222"/><path d="M1.5 2 H6.5 L5 8 H1.5Z" fill="#eee"/><path d="M1.5 8 L6.5 2 V8Z" fill="#777"/></svg><div class="t" style="left:1074.8px;top:338.29px;font-size:8.69px;line-height:12px;transform:scaleX(0.9091);transform-origin:0 0;color:#1e1e1e;">Fill and Stroke (Shift+Ctrl+F)</div><svg style="left:1247px;top:340px" width="7" height="5" viewBox="0 0 7 5"><path d="M0.5 4.5 L3.5 1 L6.5 4.5Z" fill="#555"/></svg><div class="a" style="left:1061px;top:354px;width:197px;height:17px;background:#f1f1f1;border-bottom:1px solid #d8d8d8"></div><svg style="left:1061px;top:358px" width="9" height="10" viewBox="0 0 9 10"><path d="M0.5 0.5 H5 L7 2.5 V9.5 H0.5Z" fill="#f4f4f4" stroke="#666" stroke-width="0.8"/><path d="M3 5 H9" stroke="#222" stroke-width="0.9"/><path d="M7.5 3.5 L9 5 L7.5 6.5" fill="none" stroke="#222" stroke-width="0.8"/></svg><div class="t" style="left:1069.8px;top:357.99px;font-size:8.69px;line-height:12px;transform:scaleX(0.9091);transform-origin:0 0;color:#1e1e1e;">Export PNG Image (Shift+Ctrl+E)</div><svg style="left:1232.5px;top:360px" width="8" height="7" viewBox="0 0 8 7"><rect x="0.5" y="0.5" width="7" height="6" fill="#f4f4f4" stroke="#8a8a8a" stroke-width="0.8"/><path d="M5 1.8 L2.5 3.5 L5 5.2Z" fill="#555"/></svg><svg style="left:1246.5px;top:360px" width="8" height="7" viewBox="0 0 8 7"><rect x="0.5" y="0.5" width="7" height="6" fill="#f4f4f4" stroke="#8a8a8a" stroke-width="0.8"/><path d="M2.3 1.8 L5.7 5.2 M5.7 1.8 L2.3 5.2" stroke="#444" stroke-width="0.9"/></svg><div class="t" style="left:1066.7px;top:375.09px;font-size:8.69px;line-height:12px;transform:scaleX(0.9091);transform-origin:0 0;font-weight:bold;color:#1e1e1e;">Export area</div><div class="a" style="left:1066.7px;top:390.7px;width:44.899999999999864px;height:15px;background:linear-gradient(#f2f2f2,#e2e2e2);border:1px solid #c2c2c2"></div><div class="t" style="left:1066.7px;top:392.2px;width:49.4px;text-align:center;font-size:8.69px;line-height:12px;color:#1e1e1e;transform:scaleX(0.9091);transform-origin:0 0">Page</div><div class="a" style="left:1113.2px;top:390.7px;width:45.399999999999864px;height:15px;background:linear-gradient(#dcecfc,#c4e0fa);border:1px solid #7eb4ea"></div><div class="t" style="left:1113.2px;top:392.2px;width:49.9px;text-align:center;font-size:8.69px;line-height:12px;color:#1e1e1e;transform:scaleX(0.9091);transform-origin:0 0">Drawing</div><div class="a" style="left:1160.2px;top:390.7px;width:44.200000000000045px;height:15px;background:linear-gradient(#f2f2f2,#e2e2e2);border:1px solid #c2c2c2"></div><div class="t" style="left:1160.2px;top:392.2px;width:48.6px;text-align:center;font-size:8.69px;line-height:12px;color:#1e1e1e;transform:scaleX(0.9091);transform-origin:0 0">Selection</div><div class="a" style="left:1207px;top:390.7px;width:44.700000000000045px;height:15px;background:linear-gradient(#f2f2f2,#e2e2e2);border:1px solid #c2c2c2"></div><div class="t" style="left:1207.0px;top:392.2px;width:49.2px;text-align:center;font-size:8.69px;line-height:12px;color:#1e1e1e;transform:scaleX(0.9091);transform-origin:0 0">Custom</div><div class="t" style="left:1078.5px;top:412.43px;font-size:8.58px;line-height:12px;transform:scaleX(0.9091);transform-origin:0 0;color:#333;">x0:</div><div class="inp" style="left:1108.5px;top:410.4px;width:34.7px;height:15px;border-color:#cfcfcf;overflow:hidden"><div class="t" style="left:2px;top:1.3px;font-size:8.58px;line-height:12px;color:#222;transform:scaleX(0.9091);transform-origin:0 0">-2651.42</div></div><div class="a" style="left:1143.2px;top:410.4px;width:6px;height:15px;background:linear-gradient(#f4f4f4,#e4e4e4);border:1px solid #d0d0d0"></div><svg style="left:1143.2px;top:410.4px" width="6" height="15" viewBox="0 0 6 15"><path d="M1.2 6.0 L3.0 4.0 L4.8 6.0Z M1.2 9.0 L3.0 11.0 L4.8 9.0Z" fill="#333"/></svg><div class="t" style="left:1172.4px;top:412.43px;font-size:8.58px;line-height:12px;transform:scaleX(0.9091);transform-origin:0 0;color:#333;">y0:</div><div class="inp" style="left:1205.5px;top:410.4px;width:34px;height:15px;border-color:#cfcfcf;overflow:hidden"><div class="t" style="left:2px;top:1.3px;font-size:8.58px;line-height:12px;color:#222;transform:scaleX(0.9091);transform-origin:0 0">-6605.71</div></div><div class="a" style="left:1239.5px;top:410.4px;width:6px;height:15px;background:linear-gradient(#f4f4f4,#e4e4e4);border:1px solid #d0d0d0"></div><svg style="left:1239.5px;top:410.4px" width="6" height="15" viewBox="0 0 6 15"><path d="M1.2 6.0 L3.0 4.0 L4.8 6.0Z M1.2 9.0 L3.0 11.0 L4.8 9.0Z" fill="#333"/></svg><div class="t" style="left:1078.5px;top:431.03px;font-size:8.58px;line-height:12px;transform:scaleX(0.9091);transform-origin:0 0;color:#333;">x1:</div><div class="inp" style="left:1108.5px;top:429px;width:34.7px;height:15px;border-color:#cfcfcf;overflow:hidden"><div class="t" style="left:2px;top:1.3px;font-size:8.58px;line-height:12px;color:#222;transform:scaleX(0.9091);transform-origin:0 0">15199.10</div></div><div class="a" style="left:1143.2px;top:429px;width:6px;height:15px;background:linear-gradient(#f4f4f4,#e4e4e4);border:1px solid #d0d0d0"></div><svg style="left:1143.2px;top:429px" width="6" height="15" viewBox="0 0 6 15"><path d="M1.2 6.0 L3.0 4.0 L4.8 6.0Z M1.2 9.0 L3.0 11.0 L4.8 9.0Z" fill="#333"/></svg><div class="t" style="left:1172.4px;top:431.03px;font-size:8.58px;line-height:12px;transform:scaleX(0.9091);transform-origin:0 0;color:#333;">y1:</div><div class="inp" style="left:1205.5px;top:429px;width:34px;height:15px;border-color:#cfcfcf;overflow:hidden"><div class="t" style="left:2px;top:1.3px;font-size:8.58px;line-height:12px;color:#222;transform:scaleX(0.9091);transform-origin:0 0">1953.085</div></div><div class="a" style="left:1239.5px;top:429px;width:6px;height:15px;background:linear-gradient(#f4f4f4,#e4e4e4);border:1px solid #d0d0d0"></div><svg style="left:1239.5px;top:429px" width="6" height="15" viewBox="0 0 6 15"><path d="M1.2 6.0 L3.0 4.0 L4.8 6.0Z M1.2 9.0 L3.0 11.0 L4.8 9.0Z" fill="#333"/></svg><div class="t" style="left:1071.4px;top:449.03px;font-size:8.58px;line-height:12px;transform:scaleX(0.9091);transform-origin:0 0;color:#333;">Width:</div><div class="inp" style="left:1108.5px;top:447px;width:34.7px;height:15px;border-color:#cfcfcf;overflow:hidden"><div class="t" style="left:2px;top:1.3px;font-size:8.58px;line-height:12px;color:#222;transform:scaleX(0.9091);transform-origin:0 0">17850.53</div></div><div class="a" style="left:1143.2px;top:447px;width:6px;height:15px;background:linear-gradient(#f4f4f4,#e4e4e4);border:1px solid #d0d0d0"></div><svg style="left:1143.2px;top:447px" width="6" height="15" viewBox="0 0 6 15"><path d="M1.2 6.0 L3.0 4.0 L4.8 6.0Z M1.2 9.0 L3.0 11.0 L4.8 9.0Z" fill="#333"/></svg><div class="t" style="left:1164.5px;top:449.03px;font-size:8.58px;line-height:12px;transform:scaleX(0.9091);transform-origin:0 0;color:#333;">Height:</div><div class="inp" style="left:1205.5px;top:447px;width:34px;height:15px;border-color:#cfcfcf;overflow:hidden"><div class="t" style="left:2px;top:1.3px;font-size:8.58px;line-height:12px;color:#222;transform:scaleX(0.9091);transform-origin:0 0">8558.796</div></div><div class="a" style="left:1239.5px;top:447px;width:6px;height:15px;background:linear-gradient(#f4f4f4,#e4e4e4);border:1px solid #d0d0d0"></div><svg style="left:1239.5px;top:447px" width="6" height="15" viewBox="0 0 6 15"><path d="M1.2 6.0 L3.0 4.0 L4.8 6.0Z M1.2 9.0 L3.0 11.0 L4.8 9.0Z" fill="#333"/></svg><div class="t" style="left:1193.6px;top:465.53px;font-size:8.58px;line-height:12px;transform:scaleX(0.9091);transform-origin:0 0;color:#1e1e1e;">Units:</div><div class="inp" style="left:1215.7px;top:464.4px;width:36.3px;height:12.8px;border-color:#c0c0c0"></div><div class="t" style="left:1218.0px;top:465.53px;font-size:8.58px;line-height:12px;transform:scaleX(0.9091);transform-origin:0 0;color:#111;">px</div><div class="a" style="left:1241px;top:464.4px;width:11px;height:12.8px;background:linear-gradient(#f4f4f4,#e2e2e2);border:1px solid #c0c0c0"></div><svg style="left:1243px;top:468px" width="7" height="5" viewBox="0 0 7 5"><path d="M1 1 L3.5 3.5 L6 1" fill="none" stroke="#333" stroke-width="1"/></svg><div class="t" style="left:1066.7px;top:481.19px;font-size:8.69px;line-height:12px;transform:scaleX(0.9091);transform-origin:0 0;font-weight:bold;color:#1e1e1e;">Image size</div><div class="t" style="left:1069.8px;top:496.43px;font-size:8.58px;line-height:12px;transform:scaleX(0.9091);transform-origin:0 0;color:#333;">Width:</div><div class="inp" style="left:1103px;top:494.4px;width:33px;height:14.2px;border-color:#cfcfcf"></div><div class="t" style="left:1105.5px;top:496.23px;font-size:8.58px;line-height:12px;transform:scaleX(0.9091);transform-origin:0 0;color:#222;">17851</div><div class="a" style="left:1136px;top:494.4px;width:7px;height:14.2px;background:linear-gradient(#f4f4f4,#e4e4e4);border:1px solid #d0d0d0"></div><svg style="left:1136px;top:494.4px" width="7" height="14.2" viewBox="0 0 7 14.2"><path d="M1.7 5.6 L3.5 3.5999999999999996 L5.3 5.6Z M1.7 8.6 L3.5 10.6 L5.3 8.6Z" fill="#333"/></svg><div class="t" style="left:1152.3px;top:496.50px;font-size:8.36px;line-height:12px;transform:scaleX(0.9091);transform-origin:0 0;color:#333;">pixels at</div><div class="inp" style="left:1188px;top:494.4px;width:34px;height:14.2px;border-color:#cfcfcf;background:#fff"></div><div class="t" style="left:1190.5px;top:496.23px;font-size:8.58px;line-height:12px;transform:scaleX(0.9091);transform-origin:0 0;color:#222;">90.00</div><div class="a" style="left:1222px;top:494.4px;width:6.3px;height:14.2px;background:linear-gradient(#f4f4f4,#e4e4e4);border:1px solid #d0d0d0"></div><svg style="left:1222px;top:494.4px" width="6.3" height="14.2" viewBox="0 0 6.3 14.2"><path d="M1.3499999999999999 5.6 L3.15 3.5999999999999996 L4.95 5.6Z M1.3499999999999999 8.6 L3.15 10.6 L4.95 8.6Z" fill="#333"/></svg><div class="t" style="left:1237.8px;top:496.43px;font-size:8.58px;line-height:12px;transform:scaleX(0.9091);transform-origin:0 0;color:#333;">dpi</div><div class="t" style="left:1068.5px;top:514.53px;font-size:8.58px;line-height:12px;transform:scaleX(0.9091);transform-origin:0 0;color:#333;">Height:</div><div class="inp" style="left:1103px;top:512.5px;width:33px;height:14.2px;border-color:#cfcfcf"></div><div class="t" style="left:1105.5px;top:514.33px;font-size:8.58px;line-height:12px;transform:scaleX(0.9091);transform-origin:0 0;color:#222;">8559</div><div class="a" style="left:1136px;top:512.5px;width:7px;height:14.2px;background:linear-gradient(#f4f4f4,#e4e4e4);border:1px solid #d0d0d0"></div><svg style="left:1136px;top:512.5px" width="7" height="14.2" viewBox="0 0 7 14.2"><path d="M1.7 5.6 L3.5 3.5999999999999996 L5.3 5.6Z M1.7 8.6 L3.5 10.6 L5.3 8.6Z" fill="#333"/></svg><div class="t" style="left:1152.3px;top:514.60px;font-size:8.36px;line-height:12px;transform:scaleX(0.9091);transform-origin:0 0;color:#333;">pixels at</div><div class="inp" style="left:1188px;top:512.5px;width:34px;height:14.2px;border-color:#cfcfcf;background:#f4f4f4"></div><div class="t" style="left:1190.5px;top:514.33px;font-size:8.58px;line-height:12px;transform:scaleX(0.9091);transform-origin:0 0;color:#aaa;">90.00</div><div class="a" style="left:1222px;top:512.5px;width:6.3px;height:14.2px;background:linear-gradient(#f4f4f4,#e4e4e4);border:1px solid #d0d0d0"></div><svg style="left:1222px;top:512.5px" width="6.3" height="14.2" viewBox="0 0 6.3 14.2"><path d="M1.3499999999999999 5.6 L3.15 3.5999999999999996 L4.95 5.6Z M1.3499999999999999 8.6 L3.15 10.6 L4.95 8.6Z" fill="#bbb"/></svg><div class="t" style="left:1237.8px;top:514.53px;font-size:8.58px;line-height:12px;transform:scaleX(0.9091);transform-origin:0 0;color:#bbb;">dpi</div><div class="t" style="left:1066.7px;top:530.69px;font-size:8.69px;line-height:12px;transform:scaleX(0.9091);transform-origin:0 0;font-weight:bold;color:#1e1e1e;">Filename</div><div class="inp" style="left:1066.2px;top:545.5px;width:117.2px;height:15px;border-color:#c8c8c8;overflow:hidden"><div class="t" style="left:1px;top:1.6px;font-size:8.58px;line-height:12px;color:#111;transform:scaleX(0.9091);transform-origin:0 0">er design course\rpgwarrior.png</div></div><div class="btn" style="left:1190.2px;top:544.2px;width:59px;height:17.8px"></div><svg style="left:1194.5px;top:547.5px" width="11" height="11" viewBox="0 0 11 11"><rect x="0.5" y="1.5" width="9" height="8" fill="#f4efe0" stroke="#b0a070" stroke-width="0.7"/><path d="M4 9 L6 3 L8 9Z" fill="#e0a030"/><circle cx="6" cy="3" r="1.8" fill="#f0c040"/></svg><div class="t" style="left:1207.8px;top:547.83px;font-size:8.58px;line-height:12px;transform:scaleX(0.9091);transform-origin:0 0;color:#1e1e1e;">Export As...</div><div class="chk" style="left:1065px;top:568.4px;width:8.8px;height:8px;border-color:#c8c8c8;background:#e6e6e6"></div><div class="t" style="left:1078.2px;top:567.35px;font-size:8.53px;line-height:12px;transform:scaleX(0.9091);transform-origin:0 0;color:#a6a6a6;">Batch export 3 selected objects</div><div class="chk" style="left:1065px;top:582.6px;width:8.8px;height:8px;border-color:#444"></div><div class="t" style="left:1078.2px;top:581.53px;font-size:8.58px;line-height:12px;transform:scaleX(0.9091);transform-origin:0 0;color:#1e1e1e;">Hide all except selected</div><div class="a" style="left:1064.3px;top:593.6px;width:190.1px;height:12.6px;background:#e6e6e6;border:1px solid #cdcdcd"></div><div class="chk" style="left:1067.5px;top:614.1px;width:8.2px;height:8.7px;border-color:#444"></div><div class="t" style="left:1080.0px;top:613.29px;font-size:8.69px;line-height:12px;transform:scaleX(0.9091);transform-origin:0 0;color:#1e1e1e;">Close when complete</div><div class="btn" style="left:1209.1px;top:609.4px;width:42.6px;height:18.1px"></div><svg style="left:1212px;top:611px" width="14" height="14" viewBox="0 0 14 14"><path d="M1.5 7.5 L5 11.5 L12.5 1.5" fill="none" stroke="#6a9a40" stroke-width="3.6" stroke-linecap="round" stroke-linejoin="round"/><path d="M1.5 7.5 L5 11.5 L12.5 1.5" fill="none" stroke="#a8dc78" stroke-width="2.2" stroke-linecap="round" stroke-linejoin="round"/></svg><div class="t" style="left:1227.6px;top:613.03px;font-size:8.58px;line-height:12px;transform:scaleX(0.9091);transform-origin:0 0;color:#1e1e1e;">Export</div><div class="a" style="left:1061px;top:632px;width:197px;height:1px;background:#f6f6f6"></div><div class="a" style="left:1258px;top:69px;width:22px;height:611px;background:#f3f5f4"></div><div class="a" style="left:1261px;top:92px;width:15px;height:1px;background:#d8d8d8"></div><div class="a" style="left:1261px;top:187px;width:15px;height:1px;background:#d8d8d8"></div><div class="a" style="left:1261px;top:298.75px;width:15px;height:1px;background:#d8d8d8"></div><div class="a" style="left:1261px;top:376px;width:15px;height:1px;background:#d8d8d8"></div><svg style="left:1264.5px;top:74.25px;opacity:0.72" width="11" height="11" viewBox="0 0 12 12"><path d="M2 2 L10 10" stroke="#333" stroke-width="1.2"/><rect x="0.5" y="0.5" width="3.5" height="3.5" fill="#5a5ad0" stroke="#223" stroke-width="0.5"/><rect x="8" y="8" width="3.5" height="3.5" fill="#5a5ad0" stroke="#223" stroke-width="0.5"/></svg><svg style="left:1264.5px;top:99.25px;opacity:0.72" width="11" height="11" viewBox="0 0 12 12"><path d="M2 2 L10 10" stroke="#333" stroke-width="1.2"/><rect x="0.5" y="0.5" width="3" height="3" fill="#ccc" stroke="#333" stroke-width="0.6"/><rect x="8.5" y="8.5" width="3" height="3" fill="#ccc" stroke="#333" stroke-width="0.6"/></svg><svg style="left:1264.5px;top:116.5px;opacity:0.72" width="11" height="11" viewBox="0 0 12 12"><path d="M1 10.5 H11 M9.5 1 V11" stroke="#667" stroke-width="1" stroke-dasharray="1 1"/></svg><svg style="left:1264.5px;top:136.5px;opacity:0.72" width="11" height="11" viewBox="0 0 12 12"><path d="M1 8.5 H11 M8.5 1 V11" stroke="#667" stroke-width="1" stroke-dasharray="1 1"/><circle cx="8.5" cy="8.5" r="1.8" fill="#556"/></svg><svg style="left:1264.5px;top:151.5px;opacity:0.72" width="11" height="11" viewBox="0 0 12 12"><path d="M1 10.5 H9 M9.5 4 V11" stroke="#667" stroke-width="1" stroke-dasharray="1 1"/><path d="M9.5 0.5 L11 3 L9.5 5 L8 3Z" fill="#556"/></svg><svg style="left:1264.5px;top:168.0px;opacity:0.72" width="11" height="11" viewBox="0 0 12 12"><path d="M1 10.5 H11 M10 1 V11" stroke="#667" stroke-width="1" stroke-dasharray="1 1"/><circle cx="4" cy="5" r="1.3" fill="#556"/></svg><svg style="left:1264.5px;top:194.5px;opacity:0.72" width="11" height="11" viewBox="0 0 12 12"><path d="M2 2 L10 10" stroke="#333" stroke-width="1.2"/><rect x="0.5" y="0.5" width="3.5" height="3.5" fill="#aab" stroke="#333" stroke-width="0.5"/><rect x="8" y="8" width="3.5" height="3.5" fill="#aab" stroke="#333" stroke-width="0.5"/></svg><svg style="left:1264.5px;top:210.5px;opacity:0.72" width="11" height="11" viewBox="0 0 12 12"><path d="M1 3 Q7 2 8 6 Q9 9 6 10" fill="none" stroke="#444" stroke-width="1"/><path d="M5 8 L6 10.5 L9 9.5" fill="none" stroke="#444" stroke-width="0.9"/></svg><svg style="left:1264.5px;top:230.5px;opacity:0.72" width="11" height="11" viewBox="0 0 12 12"><path d="M1 11 L11 1 M1 8 Q6 6 10 10" fill="none" stroke="#444" stroke-width="1"/></svg><svg style="left:1264.5px;top:247.0px;opacity:0.72" width="11" height="11" viewBox="0 0 12 12"><path d="M1 3 Q7 2 8 6 Q9 9 6 10" fill="none" stroke="#444" stroke-width="1"/><path d="M5 8 L6 10.5 L9 9.5" fill="none" stroke="#444" stroke-width="0.9"/></svg><svg style="left:1264.5px;top:263.25px;opacity:0.72" width="11" height="11" viewBox="0 0 12 12"><path d="M1 1 Q6 3 8 6 Q9 9 6 10" fill="none" stroke="#444" stroke-width="1"/><path d="M5 8 L6 10.5 L9 9.5" fill="none" stroke="#444" stroke-width="0.9"/></svg><svg style="left:1264.5px;top:280.5px;opacity:0.72" width="11" height="11" viewBox="0 0 12 12"><path d="M1 11 L11 1" stroke="#444" stroke-width="1.3"/><circle cx="6" cy="6" r="1.5" fill="#667"/></svg><svg style="left:1264.5px;top:305.5px;opacity:0.72" width="11" height="11" viewBox="0 0 12 12"><path d="M2 2 L10 10" stroke="#333" stroke-width="1.2"/><rect x="0.5" y="0.5" width="3.5" height="3.5" fill="#ccd" stroke="#333" stroke-width="0.5"/><rect x="8" y="8" width="3.5" height="3.5" fill="#ccd" stroke="#333" stroke-width="0.5"/></svg><svg style="left:1264.5px;top:323.25px;opacity:0.72" width="11" height="11" viewBox="0 0 12 12"><path d="M1 10.5 H11 M10 1 V11" stroke="#889" stroke-width="1" stroke-dasharray="1 1"/><circle cx="5" cy="6" r="1.3" fill="#778"/></svg><svg style="left:1264.5px;top:339.5px;opacity:0.72" width="11" height="11" viewBox="0 0 12 12"><path d="M1 10.5 H11 M10 1 V11" stroke="#667" stroke-width="1" stroke-dasharray="1 1"/><path d="M4 3 V9 M1 6 H7" stroke="#556" stroke-width="1"/></svg><svg style="left:1264.5px;top:358.25px;opacity:0.72" width="11" height="11" viewBox="0 0 12 12"><path d="M1 11 L4.5 1 H7 L11 11 H8.5 L7.5 8 H4 L3 11Z" fill="#333"/></svg><svg style="left:1264.5px;top:384.5px;opacity:0.72" width="11" height="11" viewBox="0 0 12 12"><rect x="2.5" y="0.5" width="7" height="11" fill="#aaa" stroke="#777" stroke-width="0.8"/></svg><svg style="left:1264.5px;top:402.0px;opacity:0.72" width="11" height="11" viewBox="0 0 12 12"><path d="M1 3.5 H11 M1 6.5 H11 M1 9.5 H11 M3.5 1 V11 M6.5 1 V11 M9.5 1 V11" stroke="#447" stroke-width="0.9"/></svg><svg style="left:1264.5px;top:419.5px;opacity:0.72" width="11" height="11" viewBox="0 0 12 12"><path d="M1.5 1 V11 M5 11 L9 1 M10.5 1 V11" stroke="#555" stroke-width="1.1"/></svg></body></html>
